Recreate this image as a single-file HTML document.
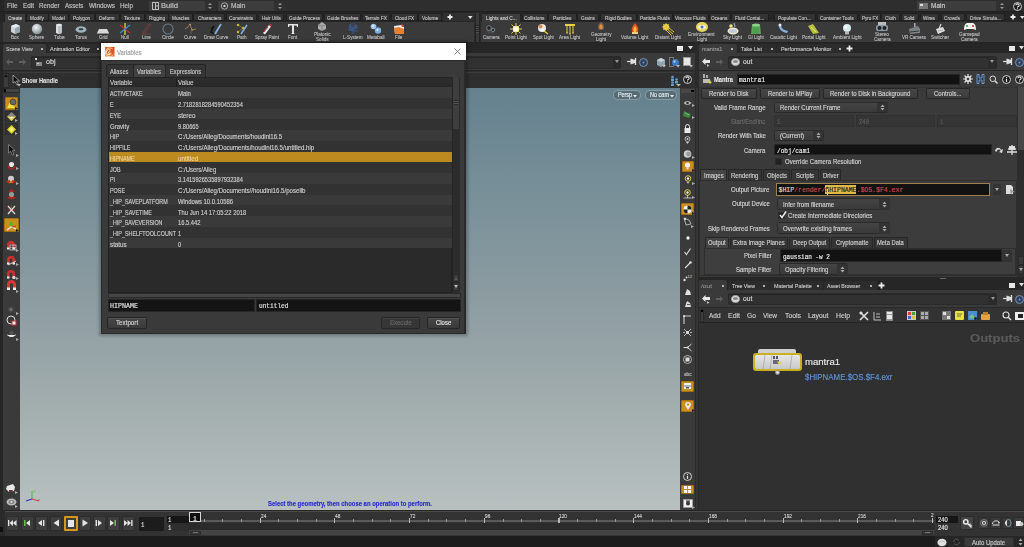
<!DOCTYPE html>
<html><head><meta charset="utf-8">
<style>
*{margin:0;padding:0;box-sizing:border-box}
html,body{width:1024px;height:547px;overflow:hidden;background:#1b1b1b;font-family:"Liberation Sans",sans-serif;color:#c8c8c8}
.a{position:absolute}
.t{position:absolute;white-space:nowrap;line-height:1;-webkit-text-stroke:0.15px currentColor}
svg{overflow:visible}
</style></head><body>

<div class="a" style="left:0px;top:0px;width:1024px;height:12px;background:#2e2e2e;"></div>
<div class="a" style="left:0px;top:0px;width:4px;height:12px;background:#262626;"></div>
<div class="t" style="left:6.80px;top:1.50px;font-size:7px;color:#c4c4c4;font-family:'Liberation Sans',sans-serif;transform:scaleX(0.9309);transform-origin:0 0;">File</div>
<div class="t" style="left:22.50px;top:1.50px;font-size:7px;color:#c4c4c4;font-family:'Liberation Sans',sans-serif;transform:scaleX(0.9119);transform-origin:0 0;">Edit</div>
<div class="t" style="left:39.00px;top:1.50px;font-size:7px;color:#c4c4c4;font-family:'Liberation Sans',sans-serif;transform:scaleX(0.8929);transform-origin:0 0;">Render</div>
<div class="t" style="left:65.00px;top:1.50px;font-size:7px;color:#c4c4c4;font-family:'Liberation Sans',sans-serif;transform:scaleX(0.8759);transform-origin:0 0;">Assets</div>
<div class="t" style="left:88.90px;top:1.50px;font-size:7px;color:#c4c4c4;font-family:'Liberation Sans',sans-serif;transform:scaleX(0.9156);transform-origin:0 0;">Windows</div>
<div class="t" style="left:120.30px;top:1.50px;font-size:7px;color:#c4c4c4;font-family:'Liberation Sans',sans-serif;transform:scaleX(0.9030);transform-origin:0 0;">Help</div>
<div class="a" style="left:149px;top:1px;width:56px;height:10px;background:#3d3d3d;border-radius:1px;"></div>
<div class="a" style="left:205px;top:1px;width:11px;height:10px;background:#303030;"></div>
<svg class="a" style="left:152px;top:2px;" width="8" height="8" viewBox="0 0 8 8"><rect x="0.5" y="0.5" width="6" height="7" fill="none" stroke="#bbb" stroke-width="1"/><line x1="3.5" y1="0.5" x2="3.5" y2="7.5" stroke="#bbb"/><line x1="3.5" y1="4" x2="6.5" y2="4" stroke="#bbb"/></svg>
<div class="t" style="left:161.00px;top:1.50px;font-size:7px;color:#c4c4c4;font-family:'Liberation Sans',sans-serif;transform:scaleX(1.0921);transform-origin:0 0;">Build</div>
<svg class="a" style="left:207px;top:2px;" width="6" height="8" viewBox="0 0 6 8"><path d="M1 3 L3 1 L5 3 Z M1 5 L3 7 L5 5 Z" fill="#999"/></svg>
<div class="a" style="left:218px;top:1px;width:56px;height:10px;background:#3d3d3d;"></div>
<div class="a" style="left:274px;top:1px;width:12px;height:10px;background:#303030;"></div>
<svg class="a" style="left:220px;top:2px;" width="9" height="8" viewBox="0 0 9 8"><circle cx="4.5" cy="4" r="3.2" fill="none" stroke="#aaa" stroke-width="1"/><rect x="3.5" y="3" width="2" height="2" fill="#ccc"/></svg>
<div class="t" style="left:231.00px;top:1.50px;font-size:7px;color:#c4c4c4;font-family:'Liberation Sans',sans-serif;transform:scaleX(0.9227);transform-origin:0 0;">Main</div>
<svg class="a" style="left:277px;top:2px;" width="6" height="8" viewBox="0 0 6 8"><path d="M1 3 L3 1 L5 3 Z M1 5 L3 7 L5 5 Z" fill="#999"/></svg>
<div class="a" style="left:917px;top:1px;width:79px;height:10px;background:#3d3d3d;"></div>
<div class="a" style="left:996px;top:1px;width:12px;height:10px;background:#303030;"></div>
<svg class="a" style="left:919px;top:2px;" width="10" height="8" viewBox="0 0 10 8"><rect x="0" y="1" width="9" height="6" fill="#777"/><rect x="1" y="2" width="3" height="2" fill="#ddd"/></svg>
<div class="t" style="left:931.00px;top:1.50px;font-size:7px;color:#d0d0d0;font-family:'Liberation Sans',sans-serif;transform:scaleX(0.9227);transform-origin:0 0;">Main</div>
<svg class="a" style="left:999px;top:2px;" width="6" height="8" viewBox="0 0 6 8"><path d="M1 3 L3 1 L5 3 Z M1 5 L3 7 L5 5 Z" fill="#999"/></svg>
<svg class="a" style="left:1012.5px;top:1.5px;" width="9" height="9" viewBox="0 0 9 9"><circle cx="4.5" cy="4.5" r="4.0" fill="#1e1e1e" stroke="#e0e0e0" stroke-width="0.9"/><path d="M2.9 3.3 A1.6 1.5 0 1 1 4.8 4.8 L4.5 5.5" fill="none" stroke="#e8e8e8" stroke-width="1.1"/><circle cx="4.5" cy="6.8" r="0.6" fill="#e8e8e8"/></svg>
<div class="a" style="left:0px;top:11px;width:1024px;height:1px;background:#1f1f1f;"></div>
<div class="a" style="left:0px;top:12px;width:1024px;height:10px;background:#262626;"></div>
<div class="a" style="left:4.1px;top:12.5px;width:21.799999999999997px;height:9.5px;background:#3c3c3c;border-radius:1.5px 1.5px 0 0;border:1px solid #222;border-bottom:none;"></div>
<div class="t" style="left:7.90px;top:14.50px;font-size:6.0px;color:#d0d0d0;font-family:'Liberation Sans',sans-serif;transform:scaleX(0.7889);transform-origin:0 0;">Create</div>
<div class="a" style="left:25.9px;top:12.5px;width:22.800000000000004px;height:8.8px;background:#333;border-radius:1.5px 1.5px 0 0;border:1px solid #1f1f1f;"></div>
<div class="t" style="left:30.37px;top:14.50px;font-size:6.0px;color:#c0c0c0;font-family:'Liberation Sans',sans-serif;transform:scaleX(0.7842);transform-origin:0 0;">Modify</div>
<div class="a" style="left:48.3px;top:12.5px;width:20.799999999999997px;height:8.8px;background:#333;border-radius:1.5px 1.5px 0 0;border:1px solid #1f1f1f;"></div>
<div class="t" style="left:52.31px;top:14.50px;font-size:6.0px;color:#c0c0c0;font-family:'Liberation Sans',sans-serif;transform:scaleX(0.7816);transform-origin:0 0;">Model</div>
<div class="a" style="left:68.8px;top:12.5px;width:26.200000000000003px;height:8.8px;background:#333;border-radius:1.5px 1.5px 0 0;border:1px solid #1f1f1f;"></div>
<div class="t" style="left:73.28px;top:14.50px;font-size:6.0px;color:#c0c0c0;font-family:'Liberation Sans',sans-serif;transform:scaleX(0.7951);transform-origin:0 0;">Polygon</div>
<div class="a" style="left:94.7px;top:12.5px;width:25.099999999999994px;height:8.8px;background:#333;border-radius:1.5px 1.5px 0 0;border:1px solid #1f1f1f;"></div>
<div class="t" style="left:99.47px;top:14.50px;font-size:6.0px;color:#c0c0c0;font-family:'Liberation Sans',sans-serif;transform:scaleX(0.7911);transform-origin:0 0;">Deform</div>
<div class="a" style="left:119.6px;top:12.5px;width:25.599999999999994px;height:8.8px;background:#333;border-radius:1.5px 1.5px 0 0;border:1px solid #1f1f1f;"></div>
<div class="t" style="left:124.31px;top:14.50px;font-size:6.0px;color:#c0c0c0;font-family:'Liberation Sans',sans-serif;transform:scaleX(0.8225);transform-origin:0 0;">Texture</div>
<div class="a" style="left:145.0px;top:12.5px;width:23.599999999999994px;height:8.8px;background:#333;border-radius:1.5px 1.5px 0 0;border:1px solid #1f1f1f;"></div>
<div class="t" style="left:148.74px;top:14.50px;font-size:6.0px;color:#c0c0c0;font-family:'Liberation Sans',sans-serif;transform:scaleX(0.7920);transform-origin:0 0;">Rigging</div>
<div class="a" style="left:168.4px;top:12.5px;width:25.099999999999994px;height:8.8px;background:#333;border-radius:1.5px 1.5px 0 0;border:1px solid #1f1f1f;"></div>
<div class="t" style="left:172.25px;top:14.50px;font-size:6.0px;color:#c0c0c0;font-family:'Liberation Sans',sans-serif;transform:scaleX(0.7904);transform-origin:0 0;">Muscles</div>
<div class="a" style="left:193.3px;top:12.5px;width:31.899999999999977px;height:8.8px;background:#333;border-radius:1.5px 1.5px 0 0;border:1px solid #1f1f1f;"></div>
<div class="t" style="left:197.52px;top:14.50px;font-size:6.0px;color:#c0c0c0;font-family:'Liberation Sans',sans-serif;transform:scaleX(0.7993);transform-origin:0 0;">Characters</div>
<div class="a" style="left:225.5px;top:12.5px;width:31.5px;height:8.8px;background:#333;border-radius:1.5px 1.5px 0 0;border:1px solid #1f1f1f;"></div>
<div class="t" style="left:229.11px;top:14.50px;font-size:6.0px;color:#c0c0c0;font-family:'Liberation Sans',sans-serif;transform:scaleX(0.7998);transform-origin:0 0;">Constraints</div>
<div class="a" style="left:258.4px;top:12.5px;width:25.600000000000023px;height:8.8px;background:#333;border-radius:1.5px 1.5px 0 0;border:1px solid #1f1f1f;"></div>
<div class="t" style="left:261.76px;top:14.50px;font-size:6.0px;color:#c0c0c0;font-family:'Liberation Sans',sans-serif;transform:scaleX(0.7760);transform-origin:0 0;">Hair Utils</div>
<div class="a" style="left:285.8px;top:12.5px;width:37.099999999999966px;height:8.8px;background:#333;border-radius:1.5px 1.5px 0 0;border:1px solid #1f1f1f;"></div>
<div class="t" style="left:288.78px;top:14.50px;font-size:6.0px;color:#c0c0c0;font-family:'Liberation Sans',sans-serif;transform:scaleX(0.7911);transform-origin:0 0;">Guide Process</div>
<div class="a" style="left:323.9px;top:12.5px;width:37.10000000000002px;height:8.8px;background:#333;border-radius:1.5px 1.5px 0 0;border:1px solid #1f1f1f;"></div>
<div class="t" style="left:326.75px;top:14.50px;font-size:6.0px;color:#c0c0c0;font-family:'Liberation Sans',sans-serif;transform:scaleX(0.7914);transform-origin:0 0;">Guide Brushes</div>
<div class="a" style="left:362.0px;top:12.5px;width:28.19999999999999px;height:8.8px;background:#333;border-radius:1.5px 1.5px 0 0;border:1px solid #1f1f1f;"></div>
<div class="t" style="left:365.17px;top:14.50px;font-size:6.0px;color:#c0c0c0;font-family:'Liberation Sans',sans-serif;transform:scaleX(0.7896);transform-origin:0 0;">Terrain FX</div>
<div class="a" style="left:390.9px;top:12.5px;width:27.200000000000045px;height:8.8px;background:#333;border-radius:1.5px 1.5px 0 0;border:1px solid #1f1f1f;"></div>
<div class="t" style="left:394.97px;top:14.50px;font-size:6.0px;color:#c0c0c0;font-family:'Liberation Sans',sans-serif;transform:scaleX(0.7622);transform-origin:0 0;">Cloud FX</div>
<div class="a" style="left:418.4px;top:12.5px;width:23.80000000000001px;height:8.8px;background:#333;border-radius:1.5px 1.5px 0 0;border:1px solid #1f1f1f;"></div>
<div class="t" style="left:422.23px;top:14.50px;font-size:6.0px;color:#c0c0c0;font-family:'Liberation Sans',sans-serif;transform:scaleX(0.8069);transform-origin:0 0;">Volume</div>
<div class="a" style="left:442.5px;top:12.5px;width:31px;height:8.5px;background:#303030;"></div>
<svg class="a" style="left:447.0px;top:13.600000000000001px;" width="6" height="6" viewBox="0 0 6 6"><path d="M3.0 0.5 L3.0 5.5 M0.5 3.0 L5.5 3.0" stroke="#ececec" stroke-width="1.8"/></svg>
<svg class="a" style="left:467.5px;top:15.5px;" width="5" height="4" viewBox="0 0 5 4"><path d="M0 0 L4.5 0 L2.25 3Z" fill="#e8e8e8"/></svg>
<div class="a" style="left:480.9px;top:12.5px;width:40.39999999999998px;height:9.5px;background:#3c3c3c;border-radius:1.5px 1.5px 0 0;border:1px solid #222;border-bottom:none;"></div>
<div class="t" style="left:485.75px;top:14.50px;font-size:6.0px;color:#d0d0d0;font-family:'Liberation Sans',sans-serif;transform:scaleX(0.7936);transform-origin:0 0;">Lights and C...</div>
<div class="a" style="left:521.5px;top:12.5px;width:26px;height:8.8px;background:#333;border-radius:1.5px 1.5px 0 0;border:1px solid #1f1f1f;"></div>
<div class="t" style="left:524.27px;top:14.50px;font-size:6.0px;color:#c0c0c0;font-family:'Liberation Sans',sans-serif;transform:scaleX(0.7969);transform-origin:0 0;">Collisions</div>
<div class="a" style="left:548.0px;top:12.5px;width:28.5px;height:8.8px;background:#333;border-radius:1.5px 1.5px 0 0;border:1px solid #1f1f1f;"></div>
<div class="t" style="left:553.09px;top:14.50px;font-size:6.0px;color:#c0c0c0;font-family:'Liberation Sans',sans-serif;transform:scaleX(0.7963);transform-origin:0 0;">Particles</div>
<div class="a" style="left:577.0px;top:12.5px;width:21.5px;height:8.8px;background:#333;border-radius:1.5px 1.5px 0 0;border:1px solid #1f1f1f;"></div>
<div class="t" style="left:580.80px;top:14.50px;font-size:6.0px;color:#c0c0c0;font-family:'Liberation Sans',sans-serif;transform:scaleX(0.7863);transform-origin:0 0;">Grains</div>
<div class="a" style="left:599.5px;top:12.5px;width:37px;height:8.8px;background:#333;border-radius:1.5px 1.5px 0 0;border:1px solid #1f1f1f;"></div>
<div class="t" style="left:604.73px;top:14.50px;font-size:6.0px;color:#c0c0c0;font-family:'Liberation Sans',sans-serif;transform:scaleX(0.7881);transform-origin:0 0;">Rigid Bodies</div>
<div class="a" style="left:636.5px;top:12.5px;width:36px;height:8.8px;background:#333;border-radius:1.5px 1.5px 0 0;border:1px solid #1f1f1f;"></div>
<div class="t" style="left:639.56px;top:14.50px;font-size:6.0px;color:#c0c0c0;font-family:'Liberation Sans',sans-serif;transform:scaleX(0.7930);transform-origin:0 0;">Particle Fluids</div>
<div class="a" style="left:673.0px;top:12.5px;width:35.5px;height:8.8px;background:#333;border-radius:1.5px 1.5px 0 0;border:1px solid #1f1f1f;"></div>
<div class="t" style="left:675.40px;top:14.50px;font-size:6.0px;color:#c0c0c0;font-family:'Liberation Sans',sans-serif;transform:scaleX(0.7958);transform-origin:0 0;">Viscous Fluids</div>
<div class="a" style="left:708.5px;top:12.5px;width:22px;height:8.8px;background:#333;border-radius:1.5px 1.5px 0 0;border:1px solid #1f1f1f;"></div>
<div class="t" style="left:711.33px;top:14.50px;font-size:6.0px;color:#c0c0c0;font-family:'Liberation Sans',sans-serif;transform:scaleX(0.7905);transform-origin:0 0;">Oceans</div>
<div class="a" style="left:730.5px;top:12.5px;width:38px;height:8.8px;background:#333;border-radius:1.5px 1.5px 0 0;border:1px solid #1f1f1f;"></div>
<div class="t" style="left:734.85px;top:14.50px;font-size:6.0px;color:#c0c0c0;font-family:'Liberation Sans',sans-serif;transform:scaleX(0.7916);transform-origin:0 0;">Fluid Contai...</div>
<div class="a" style="left:773.5px;top:12.5px;width:42.39999999999998px;height:8.8px;background:#333;border-radius:1.5px 1.5px 0 0;border:1px solid #1f1f1f;"></div>
<div class="t" style="left:778.30px;top:14.50px;font-size:6.0px;color:#c0c0c0;font-family:'Liberation Sans',sans-serif;transform:scaleX(0.7932);transform-origin:0 0;">Populate Con...</div>
<div class="a" style="left:816.5px;top:12.5px;width:41px;height:8.8px;background:#333;border-radius:1.5px 1.5px 0 0;border:1px solid #1f1f1f;"></div>
<div class="t" style="left:820.17px;top:14.50px;font-size:6.0px;color:#c0c0c0;font-family:'Liberation Sans',sans-serif;transform:scaleX(0.8094);transform-origin:0 0;">Container Tools</div>
<div class="a" style="left:859.0px;top:12.5px;width:21.5px;height:8.8px;background:#333;border-radius:1.5px 1.5px 0 0;border:1px solid #1f1f1f;"></div>
<div class="t" style="left:861.56px;top:14.50px;font-size:6.0px;color:#c0c0c0;font-family:'Liberation Sans',sans-serif;transform:scaleX(0.7556);transform-origin:0 0;">Pyro FX</div>
<div class="a" style="left:880.5px;top:12.5px;width:19px;height:8.8px;background:#333;border-radius:1.5px 1.5px 0 0;border:1px solid #1f1f1f;"></div>
<div class="t" style="left:884.53px;top:14.50px;font-size:6.0px;color:#c0c0c0;font-family:'Liberation Sans',sans-serif;transform:scaleX(0.7812);transform-origin:0 0;">Cloth</div>
<div class="a" style="left:900.5px;top:12.5px;width:18px;height:8.8px;background:#333;border-radius:1.5px 1.5px 0 0;border:1px solid #1f1f1f;"></div>
<div class="t" style="left:904.28px;top:14.50px;font-size:6.0px;color:#c0c0c0;font-family:'Liberation Sans',sans-serif;transform:scaleX(0.7823);transform-origin:0 0;">Solid</div>
<div class="a" style="left:919.5px;top:12.5px;width:19px;height:8.8px;background:#333;border-radius:1.5px 1.5px 0 0;border:1px solid #1f1f1f;"></div>
<div class="t" style="left:923.06px;top:14.50px;font-size:6.0px;color:#c0c0c0;font-family:'Liberation Sans',sans-serif;transform:scaleX(0.7745);transform-origin:0 0;">Wires</div>
<div class="a" style="left:940.5px;top:12.5px;width:24px;height:8.8px;background:#333;border-radius:1.5px 1.5px 0 0;border:1px solid #1f1f1f;"></div>
<div class="t" style="left:944.45px;top:14.50px;font-size:6.0px;color:#c0c0c0;font-family:'Liberation Sans',sans-serif;transform:scaleX(0.7920);transform-origin:0 0;">Crowds</div>
<div class="a" style="left:965.5px;top:12.5px;width:39px;height:8.8px;background:#333;border-radius:1.5px 1.5px 0 0;border:1px solid #1f1f1f;"></div>
<div class="t" style="left:969.55px;top:14.50px;font-size:6.0px;color:#c0c0c0;font-family:'Liberation Sans',sans-serif;transform:scaleX(0.7919);transform-origin:0 0;">Drive Simula...</div>
<svg class="a" style="left:1009.5px;top:13.600000000000001px;" width="6" height="6" viewBox="0 0 6 6"><path d="M3.0 0.5 L3.0 5.5 M0.5 3.0 L5.5 3.0" stroke="#ececec" stroke-width="1.8"/></svg>
<svg class="a" style="left:1019.5px;top:15.5px;" width="5" height="4" viewBox="0 0 5 4"><path d="M0 0 L4.5 0 L2.25 3Z" fill="#e8e8e8"/></svg>
<div class="a" style="left:0px;top:22px;width:1024px;height:21px;background:#3a3a3a;"></div>
<div class="a" style="left:0px;top:22px;width:3px;height:21px;background:#2a2a2a;"></div>
<div class="a" style="left:474px;top:12px;width:6.5px;height:31px;background:#2a2a2a;"></div>
<div class="a" style="left:475px;top:13px;width:4.5px;height:29px;background:#3a3a3a;border-left:1px solid #222;border-right:1px solid #222;"></div>
<div class="a" style="left:476px;top:25px;width:2.5px;height:8px;background:repeating-linear-gradient(#2a2a2a 0 1px,#4a4a4a 1px 2px);"></div>
<div class="a" style="left:0px;top:42px;width:1024px;height:1px;background:#232323;"></div>
<svg class="a" style="left:8px;top:22.5px" width="14" height="12" viewBox="0 0 14 12"><path d="M3 3 L8 1 L12 3 L12 9 L7 11 L3 9Z" fill="#c9d3d8"/><path d="M3 3 L8 1 L12 3 L7 5Z" fill="#e8eef0"/><path d="M7 5 L12 3 L12 9 L7 11Z" fill="#9aa8ae"/></svg>
<div class="t" style="left:11.08px;top:34.60px;font-size:5.8px;color:#bcbcbc;font-family:'Liberation Sans',sans-serif;transform:scaleX(0.7849);transform-origin:0 0;">Box</div>
<svg class="a" style="left:29.799999999999997px;top:22.5px" width="14" height="12" viewBox="0 0 14 12"><defs><radialGradient id="gs" cx="0.4" cy="0.35" r="0.7"><stop offset="0" stop-color="#f0f4f6"/><stop offset="1" stop-color="#7d8a90"/></radialGradient></defs><circle cx="7" cy="6" r="5.2" fill="url(#gs)"/></svg>
<div class="t" style="left:29.27px;top:34.60px;font-size:5.8px;color:#bcbcbc;font-family:'Liberation Sans',sans-serif;transform:scaleX(0.8053);transform-origin:0 0;">Sphere</div>
<svg class="a" style="left:52.4px;top:22.5px" width="14" height="12" viewBox="0 0 14 12"><rect x="4" y="1" width="6" height="10" rx="2" fill="#b9c3c8"/><ellipse cx="7" cy="2" rx="3" ry="1.2" fill="#e0e6e8"/><rect x="4" y="2" width="2" height="8" fill="#d6dde0"/></svg>
<div class="t" style="left:54.12px;top:34.60px;font-size:5.8px;color:#bcbcbc;font-family:'Liberation Sans',sans-serif;transform:scaleX(0.8116);transform-origin:0 0;">Tube</div>
<svg class="a" style="left:73.9px;top:22.5px" width="14" height="12" viewBox="0 0 14 12"><ellipse cx="7" cy="6.5" rx="5.5" ry="3.2" fill="#9fb2bd"/><ellipse cx="7" cy="6.3" rx="2.5" ry="1" fill="#2a3a45"/></svg>
<div class="t" style="left:74.96px;top:34.60px;font-size:5.8px;color:#bcbcbc;font-family:'Liberation Sans',sans-serif;transform:scaleX(0.8380);transform-origin:0 0;">Torus</div>
<svg class="a" style="left:95.9px;top:22.5px" width="14" height="12" viewBox="0 0 14 12"><path d="M3 6 L11 6 L13 10 L1 10Z" fill="#d8d8d8"/><path d="M1 10 L13 10 L13 11 L1 11Z" fill="#888"/></svg>
<div class="t" style="left:98.62px;top:34.60px;font-size:5.8px;color:#bcbcbc;font-family:'Liberation Sans',sans-serif;transform:scaleX(0.7821);transform-origin:0 0;">Grid</div>
<svg class="a" style="left:118px;top:22.5px" width="14" height="12" viewBox="0 0 14 12"><line x1="7" y1="0" x2="7" y2="12" stroke="#b8c040" stroke-width="1.6"/><line x1="2" y1="2" x2="12" y2="10" stroke="#c03030" stroke-width="1.3"/><line x1="12" y1="2" x2="2" y2="10" stroke="#4090d0" stroke-width="1.3"/></svg>
<div class="t" style="left:121.10px;top:34.60px;font-size:5.8px;color:#bcbcbc;font-family:'Liberation Sans',sans-serif;transform:scaleX(0.7812);transform-origin:0 0;">Null</div>
<svg class="a" style="left:139.2px;top:22.5px" width="14" height="12" viewBox="0 0 14 12"><path d="M3 11 L10 1 L12 2 L5 11Z" fill="none" stroke="#7a4040" stroke-width="0.9"/><line x1="3" y1="11" x2="12" y2="11" stroke="#7a4040" stroke-width="0.8"/></svg>
<div class="t" style="left:141.84px;top:34.60px;font-size:5.8px;color:#bcbcbc;font-family:'Liberation Sans',sans-serif;transform:scaleX(0.7954);transform-origin:0 0;">Line</div>
<svg class="a" style="left:161.4px;top:22.5px" width="14" height="12" viewBox="0 0 14 12"><circle cx="7" cy="6" r="5" fill="none" stroke="#6a7a8a" stroke-width="1.1"/></svg>
<div class="t" style="left:162.49px;top:34.60px;font-size:5.8px;color:#bcbcbc;font-family:'Liberation Sans',sans-serif;transform:scaleX(0.7967);transform-origin:0 0;">Circle</div>
<svg class="a" style="left:183.6px;top:22.5px" width="14" height="12" viewBox="0 0 14 12"><path d="M1 6 L4 4 L6 1 L8 7 L12 6" fill="none" stroke="#9a7a50" stroke-width="1"/><circle cx="6" cy="1.5" r="0.8" fill="#c0a070"/><circle cx="8" cy="7" r="0.8" fill="#c0a070"/><path d="M7 8 L7 11" stroke="#7a6040"/></svg>
<div class="t" style="left:184.43px;top:34.60px;font-size:5.8px;color:#bcbcbc;font-family:'Liberation Sans',sans-serif;transform:scaleX(0.7981);transform-origin:0 0;">Curve</div>
<svg class="a" style="left:209px;top:22.5px" width="14" height="12" viewBox="0 0 14 12"><path d="M2 6 L5 3 L2 9 L5 11" fill="none" stroke="#111" stroke-width="1.3"/><line x1="6" y1="11" x2="12" y2="1" stroke="#80b0e0" stroke-width="1.8"/></svg>
<div class="t" style="left:203.79px;top:34.60px;font-size:5.8px;color:#bcbcbc;font-family:'Liberation Sans',sans-serif;transform:scaleX(0.7978);transform-origin:0 0;">Draw Curve</div>
<svg class="a" style="left:234.5px;top:22.5px" width="14" height="12" viewBox="0 0 14 12"><circle cx="3" cy="2" r="1.2" fill="#e0c030"/><circle cx="8" cy="5" r="1.2" fill="#e0c030"/><circle cx="3" cy="9" r="1.2" fill="#e0c030"/><line x1="6" y1="11" x2="12" y2="2" stroke="#80b0e0" stroke-width="1.6"/><path d="M3 2 L8 5 L3 9" fill="none" stroke="#a09040" stroke-width="0.6"/></svg>
<div class="t" style="left:236.77px;top:34.60px;font-size:5.8px;color:#bcbcbc;font-family:'Liberation Sans',sans-serif;transform:scaleX(0.7920);transform-origin:0 0;">Path</div>
<svg class="a" style="left:260px;top:22.5px" width="14" height="12" viewBox="0 0 14 12"><path d="M3 10 L9 2 L11 3.5 L5 11.5Z" fill="#e8e8e8"/><path d="M9 2 L11 3.5 L12 2 L10 0.5Z" fill="#c03030"/><path d="M4 9 L8 4" stroke="#c04040" stroke-width="1"/></svg>
<div class="t" style="left:255.01px;top:34.60px;font-size:5.8px;color:#bcbcbc;font-family:'Liberation Sans',sans-serif;transform:scaleX(0.7995);transform-origin:0 0;">Spray Paint</div>
<svg class="a" style="left:286px;top:22.5px" width="14" height="12" viewBox="0 0 14 12"><path d="M2 1 L12 1 L12 4 L11 4 L10.5 2.5 L8 2.5 L8 10.5 L9.5 11 L4.5 11 L6 10.5 L6 2.5 L3.5 2.5 L3 4 L2 4Z" fill="#e4e4e4"/></svg>
<div class="t" style="left:288.39px;top:34.60px;font-size:5.8px;color:#bcbcbc;font-family:'Liberation Sans',sans-serif;transform:scaleX(0.7942);transform-origin:0 0;">Font</div>
<svg class="a" style="left:315px;top:21px" width="14" height="12" viewBox="0 0 14 12"><path d="M3 4 L7 1 L11 4 L11 8 L7 10 L3 8Z" fill="#aaa"/><path d="M3 4 L7 5 L11 4 M7 5 L7 10" fill="none" stroke="#777" stroke-width="0.7"/></svg>
<div class="t" style="left:313.67px;top:31.60px;font-size:5.8px;color:#bcbcbc;font-family:'Liberation Sans',sans-serif;transform:scaleX(0.8075);transform-origin:0 0;">Platonic</div>
<div class="t" style="left:315.67px;top:36.60px;font-size:5.8px;color:#bcbcbc;font-family:'Liberation Sans',sans-serif;transform:scaleX(0.8010);transform-origin:0 0;">Solids</div>
<svg class="a" style="left:346px;top:22.5px" width="14" height="12" viewBox="0 0 14 12"><path d="M7 11 L7 5 M7 7 L3 3 M7 6 L11 2 M5 5 L4 1 M9 4 L12 5 M6 8 L2 6 M8 8 L12 8" stroke="#3a5a90" stroke-width="1.2" fill="none"/><circle cx="7" cy="4" r="4" fill="#3a5a90" opacity="0.4"/></svg>
<div class="t" style="left:343.25px;top:34.60px;font-size:5.8px;color:#bcbcbc;font-family:'Liberation Sans',sans-serif;transform:scaleX(0.7959);transform-origin:0 0;">L-System</div>
<svg class="a" style="left:369px;top:22.5px" width="14" height="12" viewBox="0 0 14 12"><circle cx="4.5" cy="3.5" r="2.8" fill="#9cc4ec"/><circle cx="9" cy="7.5" r="3.2" fill="#7aaee0"/><circle cx="4" cy="3" r="1" fill="#e8f4ff"/><circle cx="8.5" cy="6.8" r="1.1" fill="#e8f4ff"/></svg>
<div class="t" style="left:367.19px;top:34.60px;font-size:5.8px;color:#bcbcbc;font-family:'Liberation Sans',sans-serif;transform:scaleX(0.8038);transform-origin:0 0;">Metaball</div>
<svg class="a" style="left:391.5px;top:22.5px" width="14" height="12" viewBox="0 0 14 12"><path d="M2 3 L9 2 L12 4 L12 11 L3 11Z" fill="#f0f0f0"/><path d="M2 5 L7 4 L12 6 L12 11 L3 11Z" fill="#e88030"/><path d="M9 1 L12 2 L12 4 L10 4Z" fill="#d04020"/></svg>
<div class="t" style="left:394.83px;top:34.60px;font-size:5.8px;color:#bcbcbc;font-family:'Liberation Sans',sans-serif;transform:scaleX(0.7858);transform-origin:0 0;">File</div>
<svg class="a" style="left:484px;top:22.5px" width="14" height="12" viewBox="0 0 14 12"><ellipse cx="7" cy="7" rx="5" ry="3.5" fill="#404a50"/><circle cx="5" cy="5" r="2.3" fill="#222" stroke="#aaa" stroke-width="0.6"/><circle cx="9" cy="7" r="1.6" fill="#222" stroke="#aaa" stroke-width="0.6"/></svg>
<div class="t" style="left:482.69px;top:34.60px;font-size:5.8px;color:#bcbcbc;font-family:'Liberation Sans',sans-serif;transform:scaleX(0.8058);transform-origin:0 0;">Camera</div>
<svg class="a" style="left:509px;top:22.5px" width="14" height="12" viewBox="0 0 14 12"><circle cx="7" cy="6" r="3.2" fill="#f6f0b0"/><path d="M7 0 L7 12 M1 6 L13 6 M2.5 1.5 L11.5 10.5 M11.5 1.5 L2.5 10.5" stroke="#e0d040" stroke-width="1"/><circle cx="7" cy="6" r="2.6" fill="#fffbe0"/></svg>
<div class="t" style="left:505.04px;top:34.60px;font-size:5.8px;color:#bcbcbc;font-family:'Liberation Sans',sans-serif;transform:scaleX(0.7994);transform-origin:0 0;">Point Light</div>
<svg class="a" style="left:536px;top:22.5px" width="14" height="12" viewBox="0 0 14 12"><circle cx="6" cy="5" r="4" fill="#e8e8e8"/><circle cx="4.5" cy="3.5" r="2" fill="#d09050"/><path d="M8 8 L12 11" stroke="#e0d040" stroke-width="1.5"/><circle cx="7" cy="7" r="1.5" fill="#fff"/></svg>
<div class="t" style="left:532.58px;top:34.60px;font-size:5.8px;color:#bcbcbc;font-family:'Liberation Sans',sans-serif;transform:scaleX(0.7980);transform-origin:0 0;">Spot Light</div>
<svg class="a" style="left:563px;top:22.5px" width="14" height="12" viewBox="0 0 14 12"><rect x="2" y="1" width="10" height="2" fill="#e8d040"/><path d="M4 3 L4 10 M7 3 L7 11 M10 3 L10 10" stroke="#e8d040" stroke-width="1"/><circle cx="4" cy="10" r="0.8" fill="#e8d040"/><circle cx="7" cy="11" r="0.8" fill="#e8d040"/><circle cx="10" cy="10" r="0.8" fill="#e8d040"/></svg>
<div class="t" style="left:559.45px;top:34.60px;font-size:5.8px;color:#bcbcbc;font-family:'Liberation Sans',sans-serif;transform:scaleX(0.7984);transform-origin:0 0;">Area Light</div>
<svg class="a" style="left:594px;top:21px" width="14" height="12" viewBox="0 0 14 12"><path d="M7 1 C10 3 11 6 9 9 L5 9 C3 6 4 3 7 1Z" fill="#806050"/><path d="M7 3 C9 5 9 7 8 8 L6 8 C5 6 5 5 7 3Z" fill="#e09040"/></svg>
<div class="t" style="left:590.70px;top:31.60px;font-size:5.8px;color:#bcbcbc;font-family:'Liberation Sans',sans-serif;transform:scaleX(0.8087);transform-origin:0 0;">Geometry</div>
<div class="t" style="left:595.97px;top:36.60px;font-size:5.8px;color:#bcbcbc;font-family:'Liberation Sans',sans-serif;transform:scaleX(0.7997);transform-origin:0 0;">Light</div>
<svg class="a" style="left:627.5px;top:22.5px" width="14" height="12" viewBox="0 0 14 12"><path d="M7 0 C10 3 11 6 10 9 L4 9 C3 6 4 3 7 0Z" fill="#e05020"/><path d="M7 3 C9 5 9 7 8 9 L6 9 C5 7 5 5 7 3Z" fill="#f0c040"/><rect x="4" y="9" width="6" height="2" fill="#f0d080"/></svg>
<div class="t" style="left:620.87px;top:34.60px;font-size:5.8px;color:#bcbcbc;font-family:'Liberation Sans',sans-serif;transform:scaleX(0.8127);transform-origin:0 0;">Volume Light</div>
<svg class="a" style="left:661px;top:22.5px" width="14" height="12" viewBox="0 0 14 12"><circle cx="5" cy="4" r="3" fill="#f0e060"/><path d="M5 0 L5 8 M1 4 L9 4 M2 1 L8 7 M8 1 L2 7" stroke="#e0c030" stroke-width="0.8"/><path d="M6 6 L12 11 M8 5 L13 9 M5 7 L10 12" stroke="#e0c030" stroke-width="1"/></svg>
<div class="t" style="left:655.06px;top:34.60px;font-size:5.8px;color:#bcbcbc;font-family:'Liberation Sans',sans-serif;transform:scaleX(0.8027);transform-origin:0 0;">Distant Light</div>
<svg class="a" style="left:694.7px;top:21px" width="14" height="12" viewBox="0 0 14 12"><ellipse cx="7" cy="6" rx="6" ry="5" fill="#e8d860"/><ellipse cx="7" cy="6" rx="4" ry="2" fill="#eee"/><circle cx="7" cy="6" r="1.5" fill="#6070a0"/></svg>
<div class="t" style="left:688.43px;top:31.60px;font-size:5.8px;color:#bcbcbc;font-family:'Liberation Sans',sans-serif;transform:scaleX(0.8153);transform-origin:0 0;">Environment</div>
<div class="t" style="left:696.67px;top:36.60px;font-size:5.8px;color:#bcbcbc;font-family:'Liberation Sans',sans-serif;transform:scaleX(0.7997);transform-origin:0 0;">Light</div>
<svg class="a" style="left:725.5px;top:22.5px" width="14" height="12" viewBox="0 0 14 12"><ellipse cx="7" cy="8" rx="5.5" ry="3.5" fill="#f0ecd0"/><ellipse cx="7" cy="8" rx="4" ry="2" fill="#c0c8e0"/><circle cx="5" cy="3" r="1.8" fill="#f0e080"/><path d="M8 0 L9 4" stroke="#80b0d0" stroke-width="1.2"/></svg>
<div class="t" style="left:723.02px;top:34.60px;font-size:5.8px;color:#bcbcbc;font-family:'Liberation Sans',sans-serif;transform:scaleX(0.7951);transform-origin:0 0;">Sky Light</div>
<svg class="a" style="left:748.6px;top:22.5px" width="14" height="12" viewBox="0 0 14 12"><path d="M3 2 L11 2 L12 11 L2 11Z" fill="#58a858"/><ellipse cx="7" cy="2" rx="4" ry="1.5" fill="#8ad08a"/><path d="M5 4 L5 11 M7 4 L7 11 M9 4 L9 11" stroke="#3a803a" stroke-width="0.6"/></svg>
<div class="t" style="left:747.71px;top:34.60px;font-size:5.8px;color:#bcbcbc;font-family:'Liberation Sans',sans-serif;transform:scaleX(0.7766);transform-origin:0 0;">GI Light</div>
<svg class="a" style="left:776px;top:22.5px" width="14" height="12" viewBox="0 0 14 12"><path d="M3 1 C2 5 5 9 11 10 L12 8 C7 7 5 5 5 1Z" fill="#8ab0e0"/><circle cx="4" cy="2" r="1.5" fill="#e0ecf8"/></svg>
<div class="t" style="left:769.53px;top:34.60px;font-size:5.8px;color:#bcbcbc;font-family:'Liberation Sans',sans-serif;transform:scaleX(0.8037);transform-origin:0 0;">Caustic Light</div>
<svg class="a" style="left:807px;top:22.5px" width="14" height="12" viewBox="0 0 14 12"><path d="M1 3 L6 1 L12 10 L6 11Z" fill="#b8c040"/><path d="M4 4 L9 9" stroke="#e0e860" stroke-width="1"/></svg>
<div class="t" style="left:802.24px;top:34.60px;font-size:5.8px;color:#bcbcbc;font-family:'Liberation Sans',sans-serif;transform:scaleX(0.8014);transform-origin:0 0;">Portal Light</div>
<svg class="a" style="left:840px;top:22.5px" width="14" height="12" viewBox="0 0 14 12"><circle cx="7" cy="5" r="4" fill="#d8ecec"/><rect x="5" y="8.5" width="4" height="3" fill="#b0b8b8"/><circle cx="6" cy="4" r="1.5" fill="#fff"/></svg>
<div class="t" style="left:832.71px;top:34.60px;font-size:5.8px;color:#bcbcbc;font-family:'Liberation Sans',sans-serif;transform:scaleX(0.8061);transform-origin:0 0;">Ambient Light</div>
<svg class="a" style="left:875px;top:21px" width="14" height="12" viewBox="0 0 14 12"><rect x="1" y="4" width="12" height="6" rx="2" fill="#8a9aa4"/><circle cx="4.5" cy="7" r="2" fill="#222"/><circle cx="9.5" cy="7" r="2" fill="#222"/><rect x="3" y="1" width="8" height="3" fill="#bbb"/></svg>
<div class="t" style="left:875.14px;top:31.60px;font-size:5.8px;color:#bcbcbc;font-family:'Liberation Sans',sans-serif;transform:scaleX(0.8031);transform-origin:0 0;">Stereo</div>
<div class="t" style="left:873.69px;top:36.60px;font-size:5.8px;color:#bcbcbc;font-family:'Liberation Sans',sans-serif;transform:scaleX(0.8058);transform-origin:0 0;">Camera</div>
<svg class="a" style="left:906.7px;top:22.5px" width="14" height="12" viewBox="0 0 14 12"><path d="M2 6 L11 3 L13 6 L13 10 L3 11Z" fill="#7a8488"/><rect x="7" y="0" width="1.5" height="4" fill="#aaa"/><path d="M3 9 L12 8" stroke="#333"/></svg>
<div class="t" style="left:901.84px;top:34.60px;font-size:5.8px;color:#bcbcbc;font-family:'Liberation Sans',sans-serif;transform:scaleX(0.7830);transform-origin:0 0;">VR Camera</div>
<svg class="a" style="left:932.6px;top:22.5px" width="14" height="12" viewBox="0 0 14 12"><path d="M3 6 L10 4 L12 8 L5 11Z" fill="#e0e0e0"/><path d="M6 6 L8 1" stroke="#ddd" stroke-width="1.2"/><path d="M5 8 L10 7" stroke="#888" stroke-width="0.6"/></svg>
<div class="t" style="left:930.60px;top:34.60px;font-size:5.8px;color:#bcbcbc;font-family:'Liberation Sans',sans-serif;transform:scaleX(0.8091);transform-origin:0 0;">Switcher</div>
<svg class="a" style="left:962.5px;top:21px" width="14" height="12" viewBox="0 0 14 12"><path d="M1 9 C1 3 3 2 5 2 L9 2 C11 2 13 3 13 9 L10 8 L4 8Z" fill="#f0f0f0"/><circle cx="4" cy="5" r="1" fill="#40a040"/><circle cx="10" cy="5" r="1" fill="#c03030"/></svg>
<div class="t" style="left:959.20px;top:31.60px;font-size:5.8px;color:#bcbcbc;font-family:'Liberation Sans',sans-serif;transform:scaleX(0.8087);transform-origin:0 0;">Gamepad</div>
<div class="t" style="left:961.19px;top:36.60px;font-size:5.8px;color:#bcbcbc;font-family:'Liberation Sans',sans-serif;transform:scaleX(0.8058);transform-origin:0 0;">Camera</div>
<div class="a" style="left:0px;top:43px;width:699px;height:10px;background:#262626;"></div>
<div class="a" style="left:2.5px;top:43.5px;width:43.5px;height:9.5px;background:#3a3a3a;border-radius:2px 2px 0 0;"></div>
<div class="t" style="left:5.80px;top:46.55px;font-size:5.9px;color:#c4c4c4;font-family:'Liberation Sans',sans-serif;transform:scaleX(0.8631);transform-origin:0 0;">Scene View</div>
<div class="a" style="left:40.5px;top:47.5px;width:2px;height:2px;background:#ddd;border-radius:1px;"></div>
<div class="a" style="left:47px;top:44px;width:53px;height:9px;background:#2c2c2c;border-radius:2px 2px 0 0;"></div>
<div class="t" style="left:50.30px;top:46.55px;font-size:5.9px;color:#c4c4c4;font-family:'Liberation Sans',sans-serif;transform:scaleX(0.9240);transform-origin:0 0;">Animation Editor</div>
<div class="a" style="left:97px;top:47.5px;width:2px;height:2px;background:#ddd;border-radius:1px;"></div>
<div class="a" style="left:677px;top:46px;width:6px;height:4.5px;background:#e8e8e8;"></div>
<div class="a" style="left:677px;top:46px;width:6px;height:1px;background:#fff;"></div>
<svg class="a" style="left:688px;top:46px;" width="5" height="4" viewBox="0 0 5 4"><path d="M0 0 L5 0 L2.5 3.5Z" fill="#e0e0e0"/></svg>
<div class="a" style="left:0px;top:53px;width:695px;height:17px;background:#3a3a3a;"></div>
<div class="a" style="left:0px;top:43px;width:2.5px;height:467px;background:#262626;"></div>
<svg class="a" style="left:6px;top:58.5px;" width="8" height="6" viewBox="0 0 8 6"><path d="M0 3 L3 0 L3 2 L7 2 L7 4 L3 4 L3 6Z" fill="#5e5e5e"/></svg>
<svg class="a" style="left:18.5px;top:58.5px;" width="8" height="6" viewBox="0 0 8 6"><path d="M7 3 L4 0 L4 2 L0 2 L0 4 L4 4 L4 6Z" fill="#5e5e5e"/></svg>
<div class="a" style="left:31px;top:55.7px;width:590px;height:13px;background:#313131;border:1px solid #2a2a2a;border-radius:2px;box-shadow:inset 0 1px 0 #262626;"></div>
<div class="a" style="left:613px;top:56.5px;width:8px;height:11.5px;background:#2b2b2b;"></div>
<svg class="a" style="left:615px;top:60px;" width="5" height="4" viewBox="0 0 5 4"><path d="M0 0 L4 0 L2 3Z" fill="#999"/></svg>
<svg class="a" style="left:34.5px;top:58px;" width="9" height="9" viewBox="0 0 9 9"><rect x="0" y="0" width="2" height="2" fill="#ddd"/><rect x="1" y="4" width="6" height="4" fill="#888"/><rect x="2" y="5" width="2" height="1" fill="#ccc"/></svg>
<div class="t" style="left:46.00px;top:58.25px;font-size:7.5px;color:#d8d8d8;font-family:'Liberation Sans',sans-serif;transform:scaleX(0.9491);transform-origin:0 0;">obj</div>
<svg class="a" style="left:627px;top:58.0px;" width="10" height="7" viewBox="0 0 10 7"><path d="M0 3.5 L4 3.5" stroke="#e0e0e0" stroke-width="1.2"/><path d="M3.5 0.5 L8 2 L8 5 L3.5 6.5Z" fill="#e0e0e0"/><path d="M8.5 0 L8.5 7" stroke="#e0e0e0" stroke-width="1.3"/></svg>
<div class="a" style="left:638.5px;top:57.5px;width:9px;height:9px;border-radius:50%;background:radial-gradient(circle,#7090c0 12%,#2c3c58 30%,#34486a 75%);border:1px solid #7a92b0"></div>
<svg class="a" style="left:656px;top:57px;" width="10" height="10" viewBox="0 0 10 10"><path d="M1 3 L5 1 L9 3 L9 8 L5 10 L1 8Z" fill="#8fa4ae"/><path d="M1 3 L5 1 L9 3 L5 5Z" fill="#c8d4da"/></svg>
<svg class="a" style="left:662px;top:65px;" width="4" height="3" viewBox="0 0 4 3"><path d="M0 0 L4 0 L2 2.5Z" fill="#bbb"/></svg>
<svg class="a" style="left:669px;top:57px;" width="11" height="10" viewBox="0 0 11 10"><rect x="0.5" y="0.5" width="4" height="9" fill="none" stroke="#888" stroke-width="0.8"/><circle cx="6.5" cy="5.5" r="3.5" fill="#3c7ac8"/><circle cx="5.5" cy="4.5" r="1.2" fill="#9cc"/></svg>
<svg class="a" style="left:676px;top:65px;" width="4" height="3" viewBox="0 0 4 3"><path d="M0 0 L4 0 L2 2.5Z" fill="#bbb"/></svg>
<div class="a" style="left:683px;top:57px;width:8px;height:9px;background:#e8e8e8;border:1px solid #999;"></div>
<svg class="a" style="left:689px;top:65px;" width="4" height="3" viewBox="0 0 4 3"><path d="M0 0 L4 0 L2 2.5Z" fill="#bbb"/></svg>
<div class="a" style="left:0px;top:70px;width:695px;height:1px;background:#262626;"></div>
<div class="a" style="left:2.5px;top:71px;width:692px;height:17px;background:#2f2f2f;"></div>
<div class="a" style="left:9px;top:72px;width:685px;height:1px;background:#3c3c3c;"></div>
<div class="a" style="left:3px;top:72.5px;width:5.5px;height:15px;background:#3c3c3c;border:1px solid #2a2a2a;"></div>
<svg class="a" style="left:4px;top:73.5px;" width="4" height="3" viewBox="0 0 4 3"><path d="M0 3 L2 0 L4 3Z" fill="#111"/></svg>
<svg class="a" style="left:12px;top:74.5px;" width="9" height="11" viewBox="0 0 9 11"><path d="M1 0 L1 8 L3 6.5 L5 10 L6.3 9.3 L4.5 6 L7.5 6Z" fill="#111" stroke="#bbb" stroke-width="0.7"/></svg>
<svg class="a" style="left:17px;top:83.5px;" width="4" height="3" viewBox="0 0 4 3"><path d="M0 0 L4 0 L2 2.5Z" fill="#bbb"/></svg>
<div class="t" style="left:22.00px;top:77.75px;font-size:6.5px;color:#dcdcdc;font-family:'Liberation Sans',sans-serif;font-weight:bold;transform:scaleX(0.8821);transform-origin:0 0;">Show Handle</div>
<svg class="a" style="left:670px;top:75px;" width="10" height="11" viewBox="0 0 10 11"><circle cx="2.5" cy="2" r="1.3" fill="#6a9ad0"/><rect x="1" y="3.5" width="3" height="2.5" fill="#6a9ad0"/><circle cx="2.5" cy="7.5" r="1.3" fill="#6a9ad0"/><rect x="1" y="9" width="3" height="2" fill="#6a9ad0"/><circle cx="6.5" cy="4.5" r="1.3" fill="#6a9ad0"/><rect x="5" y="6" width="3" height="2.5" fill="#6a9ad0"/></svg>
<svg class="a" style="left:676px;top:84px;" width="5" height="3" viewBox="0 0 5 3"><path d="M0 0 L5 0 L2.5 2.5Z" fill="#bbb"/></svg>
<svg class="a" style="left:683px;top:75px;" width="9" height="9" viewBox="0 0 9 9"><circle cx="4.5" cy="4.5" r="4.0" fill="#1e1e1e" stroke="#e0e0e0" stroke-width="0.9"/><path d="M2.9 3.3 A1.6 1.5 0 1 1 4.8 4.8 L4.5 5.5" fill="none" stroke="#e8e8e8" stroke-width="1.1"/><circle cx="4.5" cy="6.8" r="0.6" fill="#e8e8e8"/></svg>
<div class="a" style="left:2.5px;top:88px;width:17.5px;height:422px;background:#3a3a3a;"></div>
<div class="a" style="left:3px;top:88px;width:17px;height:4.5px;background:#444;border:1px solid #2a2a2a;"></div>
<div class="a" style="left:3.5px;top:89px;width:2.5px;height:2.5px;background:#000;"></div>
<div class="a" style="left:20px;top:88px;width:660px;height:422px;background:linear-gradient(#64818d 0%,#748d97 20%,#8c9ca1 50%,#a2adae 75%,#b8c1c0 100%);"></div>
<div class="a" style="left:680px;top:88px;width:14.5px;height:422px;background:#3a3a3a;"></div>
<div class="a" style="left:681px;top:89px;width:13px;height:3.5px;background:#474747;"></div>
<div class="a" style="left:691px;top:89.5px;width:2.5px;height:2.5px;background:#000;"></div>
<div class="a" style="left:694.5px;top:43px;width:4.5px;height:467px;background:#2a2a2a;"></div>
<div class="a" style="left:695.5px;top:88px;width:2.5px;height:422px;background:#353535;"></div>
<div class="a" style="left:613px;top:89.7px;width:28px;height:10px;border-radius:5px;background:rgba(60,70,75,.35);border:1px solid rgba(200,210,215,.45)"></div>
<div class="t" style="left:617.50px;top:91.85px;font-size:6.3px;color:#e6ecee;font-family:'Liberation Sans',sans-serif;transform:scaleX(0.8506);transform-origin:0 0;">Persp</div>
<svg class="a" style="left:632.7px;top:94.5px;" width="4" height="3" viewBox="0 0 4 3"><path d="M0 0 L4 0 L2 2.5Z" fill="#e6ecee"/></svg>
<div class="a" style="left:645px;top:89.7px;width:32px;height:10px;border-radius:5px;background:rgba(60,70,75,.35);border:1px solid rgba(200,210,215,.45)"></div>
<div class="t" style="left:649.50px;top:91.85px;font-size:6.3px;color:#e6ecee;font-family:'Liberation Sans',sans-serif;transform:scaleX(0.8753);transform-origin:0 0;">No cam</div>
<svg class="a" style="left:669.7px;top:94.5px;" width="4" height="3" viewBox="0 0 4 3"><path d="M0 0 L4 0 L2 2.5Z" fill="#e6ecee"/></svg>
<div class="t" style="left:268.00px;top:500.75px;font-size:6.5px;color:#2a2ad0;font-family:'Liberation Sans',sans-serif;font-weight:bold;transform:scaleX(0.9106);transform-origin:0 0;">Select the geometry, then choose an operation to perform.</div>
<svg class="a" style="left:24px;top:488px;" width="20" height="16" viewBox="0 0 20 16"><line x1="8" y1="11" x2="8" y2="3" stroke="#40c040" stroke-width="1"/><line x1="8" y1="11" x2="15" y2="13" stroke="#d04040" stroke-width="1"/><line x1="8" y1="11" x2="2" y2="13" stroke="#3030e0" stroke-width="1.2"/><text x="9" y="4" font-size="4" fill="#40c040" font-family="Liberation Sans">y</text><text x="14" y="13" font-size="4" fill="#d04040" font-family="Liberation Sans">x</text></svg>
<div class="a" style="left:4.7px;top:96.7px;width:13.3px;height:13.299999999999997px;background:#c8901c;border:1px solid #a87010;border-radius:1px;"></div>
<svg class="a" style="left:5.800000000000001px;top:97.8px;" width="11" height="11" viewBox="0 0 11 11"><path d="M1 10 L5 2 L9 10Z" fill="#f0e040"/><circle cx="7" cy="4" r="3" fill="#666" stroke="#222" stroke-width="0.5"/></svg>
<svg class="a" style="left:15px;top:107px;" width="3" height="3" viewBox="0 0 3 3"><path d="M0 0 L3 1.5 L0 3Z" fill="#222"/></svg>
<div class="a" style="left:4.7px;top:111.3px;width:13.3px;height:10.600000000000009px;background:#333;border:1px solid #2c2c2c;"></div>
<svg class="a" style="left:6.800000000000001px;top:112.1px;" width="9" height="9" viewBox="0 0 9 9"><path d="M4.5 0 L9 4.5 L4.5 9 L0 4.5Z" fill="#888"/><path d="M0 4.5 L9 4.5 L4.5 9Z" fill="#e8d050"/><path d="M3 5 L6 5 L4.5 7Z" fill="#fff"/></svg>
<svg class="a" style="left:15px;top:118.5px;" width="3" height="3" viewBox="0 0 3 3"><path d="M0 0 L3 1.5 L0 3Z" fill="#aaa"/></svg>
<div class="a" style="left:4.7px;top:123px;width:13.3px;height:12px;background:#333;border:1px solid #2c2c2c;"></div>
<svg class="a" style="left:6.800000000000001px;top:124.5px;" width="9" height="9" viewBox="0 0 9 9"><path d="M4.5 0 L9 4.5 L4.5 9 L0 4.5Z" fill="#e0d020"/><path d="M4.5 2 L7 4.5 L4.5 7 L2 4.5Z" fill="#f0f080"/></svg>
<svg class="a" style="left:15px;top:131.5px;" width="3" height="3" viewBox="0 0 3 3"><path d="M0 0 L3 1.5 L0 3Z" fill="#aaa"/></svg>
<svg class="a" style="left:7.0px;top:144.0px;" width="9" height="12" viewBox="0 0 9 12"><path d="M1.5 0.5 L1.5 9 L3.5 7.3 L5.5 11 L7 10.2 L5.2 6.7 L8 6.5Z" fill="#111" stroke="#aaa" stroke-width="0.6"/></svg>
<svg class="a" style="left:15.5px;top:154px;" width="3" height="3" viewBox="0 0 3 3"><path d="M0 0 L3 1.5 L0 3Z" fill="#aaa"/></svg>
<svg class="a" style="left:6.800000000000001px;top:160.5px;" width="9" height="9" viewBox="0 0 9 9"><circle cx="4.5" cy="3.5" r="2.6" fill="#e8e8e8"/><path d="M0 6 L3 4.5 L3 8Z M9 6 L6 4.5 L6 8Z M2 8.5 L7 8.5 L4.5 6.5Z" fill="#c02020"/></svg>
<svg class="a" style="left:15.5px;top:167px;" width="3" height="3" viewBox="0 0 3 3"><path d="M0 0 L3 1.5 L0 3Z" fill="#aaa"/></svg>
<svg class="a" style="left:6.300000000000001px;top:175.0px;" width="10" height="9" viewBox="0 0 10 9"><circle cx="5" cy="3.8" r="3" fill="#ccc"/><path d="M0 6.5 L4 5 L4 9Z M10 6.5 L6 5 L6 9Z" fill="#c03010"/><path d="M3 8 L7 8 L5 6Z" fill="#e07020"/></svg>
<svg class="a" style="left:15.5px;top:182px;" width="3" height="3" viewBox="0 0 3 3"><path d="M0 0 L3 1.5 L0 3Z" fill="#aaa"/></svg>
<svg class="a" style="left:6.800000000000001px;top:189.0px;" width="9" height="11" viewBox="0 0 9 11"><path d="M4.5 0 L7.5 3 L1.5 3Z M4.5 11 L7.5 8 L1.5 8Z" fill="#c02020"/><circle cx="4.5" cy="5.5" r="2.6" fill="#999"/><path d="M0 9 L3 7 L3 10Z M9 9 L6 7 L6 10Z" fill="#c02020"/></svg>
<svg class="a" style="left:6.800000000000001px;top:204.5px;" width="9" height="10" viewBox="0 0 9 10"><path d="M1 1 L8 9 M8 1 L1 9" stroke="#ddd" stroke-width="1.2"/><path d="M4.5 0 L4.5 3 M1 5 L3 5 M6 5 L8 5" stroke="#c02020" stroke-width="1.2"/></svg>
<div class="a" style="left:4px;top:218px;width:14.5px;height:13.900000000000006px;background:#c8901c;border:1px solid #a87010;border-radius:1px;"></div>
<svg class="a" style="left:5.800000000000001px;top:219.5px;" width="11" height="11" viewBox="0 0 11 11"><path d="M5 1 L3 5 L7 5Z" fill="#30c030"/><path d="M5 5 L5 8" stroke="#30c030" stroke-width="1"/><path d="M1 10 L5 7 L10 9" stroke="#e8e8e8" stroke-width="1.2" fill="none"/><path d="M6 7 L10 6" stroke="#d03030" stroke-width="1.2"/></svg>
<svg class="a" style="left:15.5px;top:229px;" width="3" height="3" viewBox="0 0 3 3"><path d="M0 0 L3 1.5 L0 3Z" fill="#222"/></svg>
<svg class="a" style="left:5.800000000000001px;top:240.0px;" width="10" height="10" viewBox="0 0 10 10"><path d="M1 8 L1 5 A4 4 0 0 1 9 5 L9 8 L6.5 8 L6.5 5 A1.5 1.5 0 0 0 3.5 5 L3.5 8Z" fill="#d03030"/><rect x="1" y="7.5" width="2.5" height="2" fill="#eee"/><rect x="6.5" y="7.5" width="2.5" height="2" fill="#eee"/><rect x="4" y="5" width="6" height="5" fill="none" stroke="#ddd" stroke-width="0.7"/><path d="M7 5 L7 10 M4 7.5 L10 7.5" stroke="#ddd" stroke-width="0.5"/></svg>
<svg class="a" style="left:15.5px;top:249px;" width="3" height="3" viewBox="0 0 3 3"><path d="M0 0 L3 1.5 L0 3Z" fill="#aaa"/></svg>
<svg class="a" style="left:5.800000000000001px;top:254.5px;" width="10" height="10" viewBox="0 0 10 10"><path d="M1 8 L1 5 A4 4 0 0 1 9 5 L9 8 L6.5 8 L6.5 5 A1.5 1.5 0 0 0 3.5 5 L3.5 8Z" fill="#d03030"/><rect x="1" y="7.5" width="2.5" height="2" fill="#eee"/><rect x="6.5" y="7.5" width="2.5" height="2" fill="#eee"/><path d="M2 10 L10 6" stroke="#ddd" stroke-width="0.9"/></svg>
<svg class="a" style="left:15.5px;top:263px;" width="3" height="3" viewBox="0 0 3 3"><path d="M0 0 L3 1.5 L0 3Z" fill="#aaa"/></svg>
<svg class="a" style="left:5.800000000000001px;top:269.0px;" width="10" height="10" viewBox="0 0 10 10"><path d="M1 8 L1 5 A4 4 0 0 1 9 5 L9 8 L6.5 8 L6.5 5 A1.5 1.5 0 0 0 3.5 5 L3.5 8Z" fill="#d03030"/><rect x="1" y="7.5" width="2.5" height="2" fill="#eee"/><rect x="6.5" y="7.5" width="2.5" height="2" fill="#eee"/><circle cx="8" cy="8.5" r="1.6" fill="#ddd"/></svg>
<svg class="a" style="left:15.5px;top:277px;" width="3" height="3" viewBox="0 0 3 3"><path d="M0 0 L3 1.5 L0 3Z" fill="#aaa"/></svg>
<svg class="a" style="left:5.5px;top:279.0px;" width="11" height="12" viewBox="0 0 11 12"><path d="M1 9 L1 5.5 A4.5 4.5 0 0 1 10 5.5 L10 9 L7 9 L7 5.5 A1.5 1.5 0 0 0 4 5.5 L4 9Z" fill="#d83838"/><rect x="1" y="8.5" width="3" height="2.5" fill="#eee"/><rect x="7" y="8.5" width="3" height="2.5" fill="#eee"/></svg>
<svg class="a" style="left:15.5px;top:290px;" width="3" height="3" viewBox="0 0 3 3"><path d="M0 0 L3 1.5 L0 3Z" fill="#aaa"/></svg>
<svg class="a" style="left:6.5px;top:306.0px;" width="8" height="7" viewBox="0 0 8 7"><circle cx="4" cy="3.5" r="3" fill="#4a4a4a"/><circle cx="4" cy="3.5" r="1.2" fill="#777"/></svg>
<svg class="a" style="left:15.5px;top:312px;" width="3" height="3" viewBox="0 0 3 3"><path d="M0 0 L3 1.5 L0 3Z" fill="#aaa"/></svg>
<svg class="a" style="left:5.5px;top:314.5px;" width="11" height="11" viewBox="0 0 11 11"><circle cx="5" cy="5" r="4" fill="none" stroke="#ddd" stroke-width="1"/><rect x="5.5" y="5.5" width="5" height="5" fill="#c03030"/><rect x="6.5" y="6.5" width="3" height="3" fill="#eee"/></svg>
<svg class="a" style="left:5.5px;top:328.5px;" width="11" height="11" viewBox="0 0 11 11"><path d="M0.5 5 Q5.5 11 10.5 5 Q5.5 8 0.5 5Z" fill="#e8e8e8"/><path d="M1 6 Q5.5 10 10 6" fill="#eee"/><circle cx="5.5" cy="4" r="2" fill="#555"/></svg>
<svg class="a" style="left:15.5px;top:338px;" width="3" height="3" viewBox="0 0 3 3"><path d="M0 0 L3 1.5 L0 3Z" fill="#aaa"/></svg>
<svg class="a" style="left:5.5px;top:483.7px;" width="10" height="9" viewBox="0 0 10 9"><path d="M1 2 L7 0 L9 3 L8 7 L3 8 L0 5Z" fill="#e8e8e8"/><path d="M3 6 L7 6 L6 8 L3 8Z" fill="#633"/></svg>
<svg class="a" style="left:14.5px;top:491px;" width="3" height="3" viewBox="0 0 3 3"><path d="M0 0 L3 1.5 L0 3Z" fill="#aaa"/></svg>
<svg class="a" style="left:5.5px;top:498.0px;" width="11" height="8" viewBox="0 0 11 8"><ellipse cx="5.5" cy="4" rx="5" ry="3.5" fill="#bbb"/><ellipse cx="5.5" cy="4" rx="3" ry="2" fill="#888"/><circle cx="5.5" cy="4" r="1" fill="#ddd"/></svg>
<svg class="a" style="left:15px;top:505px;" width="3" height="3" viewBox="0 0 3 3"><path d="M0 0 L3 1.5 L0 3Z" fill="#aaa"/></svg>
<svg class="a" style="left:683.0px;top:99.7px;" width="9" height="6" viewBox="0 0 9 6"><path d="M0.5 3 Q4.5 -1 8.5 3 Q4.5 7 0.5 3Z" fill="#bbb"/><circle cx="4.5" cy="3" r="1.3" fill="#333"/></svg>
<svg class="a" style="left:691.5px;top:104px;" width="3" height="3" viewBox="0 0 3 3"><path d="M0 0 L3 1.5 L0 3Z" fill="#aaa"/></svg>
<svg class="a" style="left:683.0px;top:109.6px;" width="9" height="8" viewBox="0 0 9 8"><path d="M1 1 L8 4 L6 8 L0 6Z" fill="#3a8a3a"/><path d="M2 3 L6 5" stroke="#aae" stroke-width="0.7"/></svg>
<svg class="a" style="left:691.5px;top:116px;" width="3" height="3" viewBox="0 0 3 3"><path d="M0 0 L3 1.5 L0 3Z" fill="#aaa"/></svg>
<svg class="a" style="left:684.0px;top:123.80000000000001px;" width="7" height="9" viewBox="0 0 7 9"><rect x="0.5" y="4" width="6" height="5" fill="#e8e8e8"/><path d="M1.5 4 L1.5 2.5 A2 2 0 0 1 5.5 2.5 L5.5 4" fill="none" stroke="#e8e8e8" stroke-width="1"/></svg>
<svg class="a" style="left:684.0px;top:135.7px;" width="7" height="8" viewBox="0 0 7 8"><circle cx="3.5" cy="3" r="2.5" fill="none" stroke="#ccc" stroke-width="0.8"/><circle cx="3.5" cy="3" r="1" fill="#ccc"/><path d="M2 6 L5 6 L3.5 8Z" fill="#ccc"/></svg>
<svg class="a" style="left:682.5px;top:150.0px;" width="9" height="8" viewBox="0 0 9 8"><circle cx="4.5" cy="4" r="3.8" fill="#ccc"/><circle cx="5.5" cy="4" r="2.2" fill="#999"/></svg>
<svg class="a" style="left:691.5px;top:156px;" width="3" height="3" viewBox="0 0 3 3"><path d="M0 0 L3 1.5 L0 3Z" fill="#aaa"/></svg>
<div class="a" style="left:681.5px;top:161.2px;width:12.5px;height:10.5px;background:#c8901c;border:1px solid #a87010;border-radius:1px;"></div>
<svg class="a" style="left:684.0px;top:162.4px;" width="7" height="8" viewBox="0 0 7 8"><circle cx="3.5" cy="3" r="2.6" fill="#f0f0f0"/><rect x="2.5" y="5.5" width="2" height="2" fill="#ddd"/></svg>
<svg class="a" style="left:691.5px;top:169px;" width="3" height="3" viewBox="0 0 3 3"><path d="M0 0 L3 1.5 L0 3Z" fill="#222"/></svg>
<svg class="a" style="left:683.5px;top:175.0px;" width="8" height="9" viewBox="0 0 8 9"><circle cx="4" cy="3.5" r="2.8" fill="none" stroke="#e0d040" stroke-width="1"/><circle cx="4" cy="3.5" r="1.2" fill="#eee"/><path d="M3 7 L5 7 L4 9Z" fill="#ddd"/></svg>
<svg class="a" style="left:691.5px;top:182px;" width="3" height="3" viewBox="0 0 3 3"><path d="M0 0 L3 1.5 L0 3Z" fill="#aaa"/></svg>
<svg class="a" style="left:683.0px;top:188.6px;" width="9" height="10" viewBox="0 0 9 10"><circle cx="4.5" cy="3.5" r="2.8" fill="none" stroke="#e0d040" stroke-width="1"/><circle cx="4.5" cy="3.5" r="1.2" fill="#eee"/><path d="M0.5 9 L8.5 9 M4.5 6 L4.5 9" stroke="#ddd" stroke-width="0.8"/></svg>
<svg class="a" style="left:691.5px;top:196px;" width="3" height="3" viewBox="0 0 3 3"><path d="M0 0 L3 1.5 L0 3Z" fill="#aaa"/></svg>
<div class="a" style="left:681px;top:203px;width:13px;height:12px;background:#c8901c;border:1px solid #a87010;border-radius:1px;"></div>
<svg class="a" style="left:683.0px;top:204.5px;" width="9" height="9" viewBox="0 0 9 9"><circle cx="4.5" cy="4.5" r="4" fill="#eee"/><path d="M4.5 0.5 A4 4 0 0 1 8.5 4.5 L4.5 4.5Z M4.5 8.5 A4 4 0 0 1 0.5 4.5 L4.5 4.5Z" fill="#222"/></svg>
<svg class="a" style="left:691.5px;top:212px;" width="3" height="3" viewBox="0 0 3 3"><path d="M0 0 L3 1.5 L0 3Z" fill="#222"/></svg>
<svg class="a" style="left:683.0px;top:217.3px;" width="9" height="9" viewBox="0 0 9 9"><path d="M1 1 L6 3 L8 7 L3 8Z" fill="none" stroke="#ccc" stroke-width="0.8"/><circle cx="2" cy="2" r="1.2" fill="#ddd"/></svg>
<svg class="a" style="left:691px;top:225px;" width="3" height="3" viewBox="0 0 3 3"><path d="M0 0 L3 1.5 L0 3Z" fill="#aaa"/></svg>
<svg class="a" style="left:685.5px;top:236.0px;" width="4" height="4" viewBox="0 0 4 4"><circle cx="2" cy="2" r="1.7" fill="#eee"/></svg>
<svg class="a" style="left:684.0px;top:248.3px;" width="7" height="7" viewBox="0 0 7 7"><path d="M0.5 4 L2.5 6.5 L6.5 0.5" fill="none" stroke="#ddd" stroke-width="1.1"/></svg>
<svg class="a" style="left:683.5px;top:261.0px;" width="8" height="8" viewBox="0 0 8 8"><path d="M1 7 L6 2" stroke="#ddd" stroke-width="1.1"/><circle cx="6.5" cy="1.5" r="1.3" fill="#ddd"/></svg>
<svg class="a" style="left:683.0px;top:273.6px;" width="9" height="8" viewBox="0 0 9 8"><circle cx="1.5" cy="6" r="1.2" fill="#ddd"/><circle cx="3.5" cy="3.5" r="0.9" fill="#ddd"/><text x="4.5" y="4" font-size="4" fill="#ddd" font-family="Liberation Sans">12</text></svg>
<svg class="a" style="left:683.5px;top:288.5px;" width="8" height="7" viewBox="0 0 8 7"><path d="M1 6 L7 6 L6 2 L3 0 L2 3Z" fill="#e0e0e0"/></svg>
<svg class="a" style="left:683.5px;top:301.0px;" width="8" height="7" viewBox="0 0 8 7"><path d="M1 6 L7 6 L6 2 L3 0 L2 3Z" fill="#e0e0e0"/><rect x="3" y="3" width="3" height="1" fill="#555"/></svg>
<svg class="a" style="left:683.0px;top:314.8px;" width="9" height="9" viewBox="0 0 9 9"><path d="M1 9 L1 1 L8 1" fill="none" stroke="#ccc" stroke-width="1.1"/><circle cx="1" cy="1" r="1" fill="#ddd"/></svg>
<svg class="a" style="left:683.0px;top:328.3px;" width="9" height="9" viewBox="0 0 9 9"><path d="M1 1 L8 8 M8 1 L1 8" stroke="#ccc" stroke-width="0.9"/><circle cx="4.5" cy="4.5" r="1.5" fill="#ddd"/><path d="M0 4.5 L2 4.5 M7 4.5 L9 4.5" stroke="#aaa"/></svg>
<svg class="a" style="left:683.0px;top:342.7px;" width="9" height="9" viewBox="0 0 9 9"><path d="M4.5 4.5 L8.5 1 M4.5 4.5 L8.5 8 M4.5 4.5 L0.5 4.5" stroke="#ddd" stroke-width="1"/><circle cx="4.5" cy="4.5" r="1.1" fill="#ddd"/></svg>
<svg class="a" style="left:683.0px;top:355.3px;" width="9" height="9" viewBox="0 0 9 9"><circle cx="4.5" cy="4.5" r="4" fill="none" stroke="#ccc" stroke-width="0.8"/><rect x="2.5" y="2.5" width="4" height="4" fill="#ddd"/></svg>
<div class="t" style="left:683.73px;top:371.90px;font-size:5.2px;color:#bbb;font-family:'Liberation Sans',sans-serif;transform:scaleX(0.9000);transform-origin:0 0;">abc</div>
<div class="a" style="left:681px;top:380.8px;width:13px;height:11.0px;background:#c8901c;border:1px solid #a87010;border-radius:1px;"></div>
<svg class="a" style="left:683.0px;top:382.3px;" width="9" height="8" viewBox="0 0 9 8"><rect x="1" y="1" width="7" height="6" fill="#eee"/><path d="M1 4 L8 4" stroke="#555" stroke-width="0.8"/><rect x="3" y="5" width="3" height="1.5" fill="#555"/></svg>
<div class="a" style="left:681px;top:399.7px;width:13px;height:12.300000000000011px;background:#c8901c;border:1px solid #a87010;border-radius:1px;"></div>
<svg class="a" style="left:683.5px;top:401.0px;" width="8" height="9" viewBox="0 0 8 9"><path d="M4 9 L1 4 A3 3 0 1 1 7 4Z" fill="#eee"/><circle cx="4" cy="3.5" r="1.2" fill="#c8901c"/></svg>
<svg class="a" style="left:691.5px;top:409px;" width="3" height="3" viewBox="0 0 3 3"><path d="M0 0 L3 1.5 L0 3Z" fill="#222"/></svg>
<svg class="a" style="left:682.5px;top:472px;" width="9" height="9" viewBox="0 0 9 9"><circle cx="4.5" cy="4.5" r="4.0" fill="#3a3a3a" stroke="#e0e0e0" stroke-width="0.9"/><path d="M4.5 3.7 L4.5 6.9" stroke="#e8e8e8" stroke-width="1.2"/><circle cx="4.5" cy="2.3" r="0.65" fill="#e8e8e8"/></svg>
<div class="a" style="left:681px;top:484.7px;width:13px;height:9.800000000000011px;background:#c8901c;border:1px solid #a87010;border-radius:1px;"></div>
<svg class="a" style="left:684.0px;top:486.1px;" width="7" height="7" viewBox="0 0 7 7"><rect x="0" y="0" width="3" height="3" fill="#fff"/><rect x="4" y="0" width="3" height="3" fill="#fff"/><rect x="0" y="4" width="3" height="3" fill="#fff"/><rect x="4" y="4" width="3" height="3" fill="#fff"/></svg>
<svg class="a" style="left:682.5px;top:499.3px;" width="10" height="9" viewBox="0 0 10 9"><rect x="0.5" y="0.5" width="9" height="8" fill="#f0f0f0" stroke="#aaa" stroke-width="0.5"/><circle cx="5" cy="4.5" r="2" fill="#333"/><rect x="3" y="1.5" width="4" height="1.2" fill="#333"/></svg>
<svg class="a" style="left:691.5px;top:506px;" width="3" height="3" viewBox="0 0 3 3"><path d="M0 0 L3 1.5 L0 3Z" fill="#aaa"/></svg>
<div class="a" style="left:699px;top:43px;width:325px;height:10px;background:#262626;"></div>
<div class="a" style="left:699px;top:43.5px;width:37.6px;height:9.5px;background:#3a3a3a;border-radius:2px 2px 0 0;"></div>
<div class="t" style="left:702.00px;top:46.55px;font-size:5.9px;color:#9a9a9a;font-family:'Liberation Sans',sans-serif;transform:scaleX(0.9471);transform-origin:0 0;">mantra1</div>
<div class="a" style="left:731px;top:47.5px;width:2px;height:2px;background:#ddd;border-radius:1px;"></div>
<div class="a" style="left:737.5px;top:44px;width:38.5px;height:9px;background:#2c2c2c;border-radius:2px 2px 0 0;"></div>
<div class="t" style="left:741.00px;top:46.55px;font-size:5.9px;color:#c4c4c4;font-family:'Liberation Sans',sans-serif;transform:scaleX(0.9019);transform-origin:0 0;">Take List</div>
<div class="a" style="left:771px;top:47.5px;width:2px;height:2px;background:#ddd;border-radius:1px;"></div>
<div class="a" style="left:777px;top:44px;width:69px;height:9px;background:#2c2c2c;border-radius:2px 2px 0 0;"></div>
<div class="t" style="left:780.50px;top:46.55px;font-size:5.9px;color:#c4c4c4;font-family:'Liberation Sans',sans-serif;transform:scaleX(0.9167);transform-origin:0 0;">Performance Monitor</div>
<div class="a" style="left:838.5px;top:47.5px;width:2px;height:2px;background:#ddd;border-radius:1px;"></div>
<svg class="a" style="left:845.5px;top:44.5px;" width="7" height="7" viewBox="0 0 7 7"><path d="M3.5 0.5 L3.5 6.5 M0.5 3.5 L6.5 3.5" stroke="#ececec" stroke-width="1.8"/></svg>
<div class="a" style="left:1009px;top:46px;width:6px;height:4.5px;background:#e8e8e8;"></div>
<svg class="a" style="left:1019px;top:46px;" width="5" height="4" viewBox="0 0 5 4"><path d="M0 0 L5 0 L2.5 3.5Z" fill="#e0e0e0"/></svg>
<div class="a" style="left:699px;top:53px;width:325px;height:17px;background:#3a3a3a;"></div>
<svg class="a" style="left:702px;top:57.5px;" width="9" height="8" viewBox="0 0 9 8"><path d="M0 3.5 L3.5 0 L3.5 2 L8 2 L8 5 L3.5 5 L3.5 7Z" fill="#e8e8e8"/></svg>
<svg class="a" style="left:707px;top:64px;" width="3" height="3" viewBox="0 0 3 3"><path d="M0 0 L2.5 1.5 L0 3Z" fill="#bbb"/></svg>
<svg class="a" style="left:716px;top:58.5px;" width="8" height="6" viewBox="0 0 8 6"><path d="M7 3 L4 0 L4 2 L0 2 L0 4 L4 4 L4 6Z" fill="#5e5e5e"/></svg>
<div class="a" style="left:728px;top:55.5px;width:268.5px;height:13px;background:#313131;border:1px solid #2a2a2a;border-radius:2px;box-shadow:inset 0 1px 0 #262626;"></div>
<div class="a" style="left:988px;top:56.5px;width:8px;height:11px;background:#2b2b2b;"></div>
<svg class="a" style="left:990px;top:60px;" width="5" height="4" viewBox="0 0 5 4"><path d="M0 0 L4 0 L2 3Z" fill="#999"/></svg>
<div class="a" style="left:731px;top:57.5px;width:9px;height:8px;border-radius:50%;background:#ddd;border:1px solid #999"></div>
<div class="a" style="left:733px;top:59.5px;width:5px;height:3px;background:#888;border-radius:50%;"></div>
<div class="t" style="left:743.00px;top:58.25px;font-size:7.5px;color:#d8d8d8;font-family:'Liberation Sans',sans-serif;transform:scaleX(0.8920);transform-origin:0 0;">out</div>
<svg class="a" style="left:1003px;top:58.0px;" width="10" height="7" viewBox="0 0 10 7"><path d="M0 3.5 L4 3.5" stroke="#e0e0e0" stroke-width="1.2"/><path d="M3.5 0.5 L8 2 L8 5 L3.5 6.5Z" fill="#e0e0e0"/><path d="M8.5 0 L8.5 7" stroke="#e0e0e0" stroke-width="1.3"/></svg>
<div class="a" style="left:1014.5px;top:57.5px;width:9px;height:9px;border-radius:50%;background:radial-gradient(circle,#7090c0 12%,#2c3c58 30%,#34486a 75%);border:1px solid #7a92b0"></div>
<div class="a" style="left:699px;top:70px;width:325px;height:1px;background:#262626;"></div>
<div class="a" style="left:699px;top:71px;width:325px;height:206px;background:#3a3a3a;"></div>
<div class="a" style="left:699px;top:72px;width:38px;height:14px;background:#3d3d3d;"></div>
<svg class="a" style="left:701.5px;top:73.5px;" width="11" height="11" viewBox="0 0 11 11"><rect x="1" y="0" width="2" height="4" fill="#aaa"/><rect x="4" y="1" width="2" height="3" fill="#aaa"/><path d="M1 5 L8 5 L9 9 L1 9Z" fill="#bbb"/><path d="M4 6 L10 8 L8 10Z" fill="#d8d040"/></svg>
<div class="t" style="left:713.50px;top:76.85px;font-size:6.3px;color:#e4e4e4;font-family:'Liberation Sans',sans-serif;font-weight:bold;transform:scaleX(0.9170);transform-origin:0 0;">Mantra</div>
<div class="a" style="left:736.5px;top:73.5px;width:223.5px;height:11.5px;background:#121212;border:1px solid #262626;"></div>
<div class="t" style="left:738.50px;top:77.70px;font-size:6.6px;color:#f0f0f0;font-family:'Liberation Mono',monospace;transform:scaleX(0.9378);transform-origin:0 0;">mantra1</div>
<svg class="a" style="left:963px;top:74px;" width="10" height="10" viewBox="0 0 10 10"><circle cx="5" cy="5" r="3" fill="#ddd"/><path d="M5 0 L5 10 M0 5 L10 5 M1.5 1.5 L8.5 8.5 M8.5 1.5 L1.5 8.5" stroke="#ddd" stroke-width="1.2"/><circle cx="5" cy="5" r="1.3" fill="#3a3a3a"/></svg>
<svg class="a" style="left:976px;top:74px;" width="9" height="10" viewBox="0 0 9 10"><path d="M1 0.5 L3 0.5 L3 4 L6 4 L6 0.5 L8 0.5 L8 9.5 L6 9.5 L6 6 L3 6 L3 9.5 L1 9.5Z" fill="#234" stroke="#7aa0e0" stroke-width="0.9"/></svg>
<svg class="a" style="left:989px;top:74.5px;" width="9" height="9" viewBox="0 0 9 9"><circle cx="3.8" cy="3.8" r="2.8" fill="none" stroke="#ddd" stroke-width="1"/><line x1="6" y1="6" x2="8.5" y2="8.5" stroke="#ddd" stroke-width="1.4"/></svg>
<svg class="a" style="left:1001.5px;top:74.5px;" width="9" height="9" viewBox="0 0 9 9"><circle cx="4.5" cy="4.5" r="4.0" fill="#1e1e1e" stroke="#e0e0e0" stroke-width="0.9"/><path d="M4.5 3.7 L4.5 6.9" stroke="#e8e8e8" stroke-width="1.2"/><circle cx="4.5" cy="2.3" r="0.65" fill="#e8e8e8"/></svg>
<svg class="a" style="left:1014.5px;top:74.5px;" width="9" height="9" viewBox="0 0 9 9"><circle cx="4.5" cy="4.5" r="4.0" fill="#1e1e1e" stroke="#e0e0e0" stroke-width="0.9"/><path d="M2.9 3.3 A1.6 1.5 0 1 1 4.8 4.8 L4.5 5.5" fill="none" stroke="#e8e8e8" stroke-width="1.1"/><circle cx="4.5" cy="6.8" r="0.6" fill="#e8e8e8"/></svg>
<div class="a" style="left:699px;top:86.5px;width:318px;height:1px;background:#333;"></div>
<div class="a" style="left:1017px;top:87px;width:7px;height:190px;background:#2d2d2d;"></div>
<div class="a" style="left:1017.5px;top:87px;width:6px;height:63px;background:#474747;"></div>
<div class="a" style="left:1017.5px;top:256px;width:6px;height:9px;background:#3a3a3a;border:1px solid #2a2a2a;"></div>
<div class="a" style="left:1017.5px;top:265px;width:6px;height:9px;background:#3a3a3a;border:1px solid #2a2a2a;"></div>
<svg class="a" style="left:1019px;top:268px;" width="4" height="3" viewBox="0 0 4 3"><path d="M0 0 L4 0 L2 3Z" fill="#aaa"/></svg>
<div class="a" style="left:701px;top:88px;width:55.700000000000045px;height:10.5px;background:linear-gradient(#474747,#3b3b3b);border:1px solid #262626;border-radius:1.5px;"></div>
<div class="t" style="left:709.04px;top:90.75px;font-size:6.5px;color:#d0d0d0;font-family:'Liberation Sans',sans-serif;transform:scaleX(0.9216);transform-origin:0 0;">Render to Disk</div>
<div class="a" style="left:759.8px;top:88px;width:60.200000000000045px;height:10.5px;background:linear-gradient(#474747,#3b3b3b);border:1px solid #262626;border-radius:1.5px;"></div>
<div class="t" style="left:767.84px;top:90.75px;font-size:6.5px;color:#d0d0d0;font-family:'Liberation Sans',sans-serif;transform:scaleX(0.9112);transform-origin:0 0;">Render to MPlay</div>
<div class="a" style="left:822.7px;top:88px;width:95.29999999999995px;height:10.5px;background:linear-gradient(#474747,#3b3b3b);border:1px solid #262626;border-radius:1.5px;"></div>
<div class="t" style="left:830.22px;top:90.75px;font-size:6.5px;color:#d0d0d0;font-family:'Liberation Sans',sans-serif;transform:scaleX(0.9293);transform-origin:0 0;">Render to Disk in Background</div>
<div class="a" style="left:925.8px;top:88px;width:44.200000000000045px;height:10.5px;background:linear-gradient(#474747,#3b3b3b);border:1px solid #262626;border-radius:1.5px;"></div>
<div class="t" style="left:934.13px;top:90.75px;font-size:6.5px;color:#d0d0d0;font-family:'Liberation Sans',sans-serif;transform:scaleX(0.9294);transform-origin:0 0;">Controls...</div>
<div class="t" style="left:714.19px;top:104.75px;font-size:6.5px;color:#d4d4d4;font-family:'Liberation Sans',sans-serif;transform:scaleX(0.9278);transform-origin:0 0;">Valid Frame Range</div>
<div class="a" style="left:774px;top:102px;width:114px;height:10.799999999999997px;background:linear-gradient(#444,#3a3a3a);border:1px solid #2a2a2a;border-radius:1.5px;"></div>
<div class="a" style="left:877px;top:102.5px;width:10.5px;height:9.799999999999997px;background:#333;"></div>
<svg class="a" style="left:880px;top:103.9px;" width="5" height="7" viewBox="0 0 5 7"><path d="M0.5 3 L2.5 0.5 L4.5 3Z M0.5 4 L2.5 6.5 L4.5 4Z" fill="#aaa"/></svg>
<div class="t" style="left:780.00px;top:104.75px;font-size:6.5px;color:#d0d0d0;font-family:'Liberation Sans',sans-serif;transform:scaleX(0.9234);transform-origin:0 0;">Render Current Frame</div>
<div class="t" style="left:731.37px;top:118.75px;font-size:6.5px;color:#6a6a6a;font-family:'Liberation Sans',sans-serif;transform:scaleX(0.9138);transform-origin:0 0;">Start/End/Inc</div>
<div class="a" style="left:774px;top:115px;width:80px;height:12.4px;background:#353535;border:1px solid #303030;"></div>
<div class="t" style="left:776.50px;top:119.75px;font-size:6.5px;color:#5e5e5e;font-family:'Liberation Mono',monospace;transform:scaleX(0.8500);transform-origin:0 0;">1</div>
<div class="a" style="left:856px;top:115px;width:79px;height:12.4px;background:#353535;border:1px solid #303030;"></div>
<div class="t" style="left:858.50px;top:119.75px;font-size:6.5px;color:#5e5e5e;font-family:'Liberation Mono',monospace;transform:scaleX(0.8500);transform-origin:0 0;">240</div>
<div class="a" style="left:937px;top:115px;width:80px;height:12.4px;background:#353535;border:1px solid #303030;"></div>
<div class="t" style="left:939.50px;top:119.75px;font-size:6.5px;color:#5e5e5e;font-family:'Liberation Mono',monospace;transform:scaleX(0.8500);transform-origin:0 0;">1</div>
<div class="t" style="left:717.86px;top:132.75px;font-size:6.5px;color:#d4d4d4;font-family:'Liberation Sans',sans-serif;transform:scaleX(0.9281);transform-origin:0 0;">Render With Take</div>
<div class="a" style="left:774px;top:130px;width:49.5px;height:10.5px;background:linear-gradient(#444,#3a3a3a);border:1px solid #2a2a2a;border-radius:1.5px;"></div>
<div class="a" style="left:812.5px;top:130.5px;width:10.5px;height:9.5px;background:#333;"></div>
<svg class="a" style="left:815.5px;top:131.75px;" width="5" height="7" viewBox="0 0 5 7"><path d="M0.5 3 L2.5 0.5 L4.5 3Z M0.5 4 L2.5 6.5 L4.5 4Z" fill="#aaa"/></svg>
<div class="t" style="left:780.00px;top:132.75px;font-size:6.5px;color:#d0d0d0;font-family:'Liberation Sans',sans-serif;transform:scaleX(0.9265);transform-origin:0 0;">(Current)</div>
<div class="t" style="left:744.35px;top:147.75px;font-size:6.5px;color:#d4d4d4;font-family:'Liberation Sans',sans-serif;transform:scaleX(0.9236);transform-origin:0 0;">Camera</div>
<div class="a" style="left:774px;top:144px;width:217.5px;height:11.300000000000011px;background:#121212;border:1px solid #262626;"></div>
<div class="t" style="left:776.50px;top:148.70px;font-size:6.6px;color:#f0f0f0;font-family:'Liberation Mono',monospace;transform:scaleX(0.9258);transform-origin:0 0;">/obj/cam1</div>
<svg class="a" style="left:994px;top:146px;" width="10" height="8" viewBox="0 0 10 8"><path d="M1 5 C2 1 6 1 7 4 L9 3 L8 7 L5 6 L6.5 5 C6 3 3 3 2.5 6Z" fill="#ddd"/></svg>
<svg class="a" style="left:1007px;top:145px;" width="11" height="11" viewBox="0 0 11 11"><path d="M5 0 L5 10 M1 4 L9 4 M0 7 L10 7" stroke="#ddd" stroke-width="1.3"/><rect x="2" y="1" width="6" height="4" fill="#ddd"/></svg>
<div class="a" style="left:775px;top:157.5px;width:7px;height:7px;background:#222;border:1px solid #2c2c2c;"></div>
<div class="t" style="left:785.00px;top:158.75px;font-size:6.5px;color:#d0d0d0;font-family:'Liberation Sans',sans-serif;transform:scaleX(0.9272);transform-origin:0 0;">Override Camera Resolution</div>
<div class="a" style="left:700px;top:169px;width:27px;height:11px;background:#444;border:1px solid #262626;border-bottom:none;border-radius:1.5px 1.5px 0 0;"></div>
<div class="t" style="left:703.65px;top:172.80px;font-size:6.4px;color:#cfcfcf;font-family:'Liberation Sans',sans-serif;transform:scaleX(0.9390);transform-origin:0 0;">Images</div>
<div class="a" style="left:728px;top:169px;width:34px;height:11px;background:#363636;border:1px solid #262626;border-bottom:none;border-radius:1.5px 1.5px 0 0;"></div>
<div class="t" style="left:731.27px;top:172.80px;font-size:6.4px;color:#cfcfcf;font-family:'Liberation Sans',sans-serif;transform:scaleX(0.9297);transform-origin:0 0;">Rendering</div>
<div class="a" style="left:763px;top:169px;width:27px;height:11px;background:#363636;border:1px solid #262626;border-bottom:none;border-radius:1.5px 1.5px 0 0;"></div>
<div class="t" style="left:766.52px;top:172.80px;font-size:6.4px;color:#cfcfcf;font-family:'Liberation Sans',sans-serif;transform:scaleX(0.9202);transform-origin:0 0;">Objects</div>
<div class="a" style="left:791px;top:169px;width:28px;height:11px;background:#363636;border:1px solid #262626;border-bottom:none;border-radius:1.5px 1.5px 0 0;"></div>
<div class="t" style="left:795.99px;top:172.80px;font-size:6.4px;color:#cfcfcf;font-family:'Liberation Sans',sans-serif;transform:scaleX(0.9216);transform-origin:0 0;">Scripts</div>
<div class="a" style="left:820px;top:169px;width:21px;height:11px;background:#363636;border:1px solid #262626;border-bottom:none;border-radius:1.5px 1.5px 0 0;"></div>
<div class="t" style="left:822.69px;top:172.80px;font-size:6.4px;color:#cfcfcf;font-family:'Liberation Sans',sans-serif;transform:scaleX(0.9148);transform-origin:0 0;">Driver</div>
<div class="a" style="left:699px;top:180px;width:318px;height:96px;background:#3c3c3c;border:1px solid #2e2e2e;"></div>
<div class="t" style="left:731.25px;top:186.75px;font-size:6.5px;color:#d4d4d4;font-family:'Liberation Sans',sans-serif;transform:scaleX(0.9206);transform-origin:0 0;">Output Picture</div>
<div class="a" style="left:776px;top:183.2px;width:214px;height:12.5px;background:#121212;border:1px solid #262626;"></div>
<div class="a" style="left:776px;top:183.2px;width:214px;height:12.5px;border:1px solid #a08050"></div>
<div class="t" style="left:778.50px;top:187.75px;font-size:6.5px;color:#e6dcb8;font-family:'Liberation Mono',monospace;">$HIP</div>
<div class="t" style="left:794.10px;top:187.75px;font-size:6.5px;color:#d04848;font-family:'Liberation Mono',monospace;">/render/</div>
<div class="a" style="left:825.3000000000001px;top:185.3px;width:31.2px;height:8.5px;background:#e0b848;"></div>
<div class="t" style="left:825.30px;top:187.75px;font-size:6.5px;color:#2a2010;font-family:'Liberation Mono',monospace;">$HIPNAME</div>
<div class="t" style="left:856.50px;top:187.75px;font-size:6.5px;color:#d04848;font-family:'Liberation Mono',monospace;">.$OS.$F4.exr</div>
<div class="a" style="left:827px;top:189px;width:1px;height:6px;background:#ccc;"></div>
<div class="a" style="left:993px;top:183.5px;width:8px;height:11px;background:#333;"></div>
<svg class="a" style="left:995px;top:187.5px;" width="5" height="4" viewBox="0 0 5 4"><path d="M0 0 L4 0 L2 3Z" fill="#aaa"/></svg>
<svg class="a" style="left:1005px;top:184px;" width="10" height="11" viewBox="0 0 10 11"><path d="M1 1 L6 1 L8 3 L8 10 L1 10Z" fill="#ddd"/><path d="M5 5 L10 8 L7 8.5 L6 11Z" fill="#999"/></svg>
<div class="t" style="left:731.64px;top:200.75px;font-size:6.5px;color:#d4d4d4;font-family:'Liberation Sans',sans-serif;transform:scaleX(0.9192);transform-origin:0 0;">Output Device</div>
<div class="a" style="left:777px;top:198px;width:113px;height:12px;background:linear-gradient(#444,#3a3a3a);border:1px solid #2a2a2a;border-radius:1.5px;"></div>
<div class="a" style="left:879px;top:198.5px;width:10.5px;height:11px;background:#333;"></div>
<svg class="a" style="left:882px;top:200.5px;" width="5" height="7" viewBox="0 0 5 7"><path d="M0.5 3 L2.5 0.5 L4.5 3Z M0.5 4 L2.5 6.5 L4.5 4Z" fill="#aaa"/></svg>
<div class="t" style="left:783.00px;top:201.75px;font-size:6.5px;color:#d0d0d0;font-family:'Liberation Sans',sans-serif;transform:scaleX(0.9457);transform-origin:0 0;">Infer from filename</div>
<div class="a" style="left:778px;top:212px;width:7px;height:6.5px;background:#222;border:1px solid #2c2c2c;"></div>
<svg class="a" style="left:778.5px;top:211px;" width="8" height="8" viewBox="0 0 8 8"><path d="M1 4 L3 6.5 L7 0.5" fill="none" stroke="#eee" stroke-width="1.5"/></svg>
<div class="t" style="left:788.00px;top:212.75px;font-size:6.5px;color:#d0d0d0;font-family:'Liberation Sans',sans-serif;transform:scaleX(0.9339);transform-origin:0 0;">Create Intermediate Directories</div>
<div class="t" style="left:707.70px;top:225.75px;font-size:6.5px;color:#d4d4d4;font-family:'Liberation Sans',sans-serif;transform:scaleX(0.9247);transform-origin:0 0;">Skip Rendered Frames</div>
<div class="a" style="left:777px;top:222px;width:113px;height:12px;background:linear-gradient(#444,#3a3a3a);border:1px solid #2a2a2a;border-radius:1.5px;"></div>
<div class="a" style="left:879px;top:222.5px;width:10.5px;height:11px;background:#333;"></div>
<svg class="a" style="left:882px;top:224.5px;" width="5" height="7" viewBox="0 0 5 7"><path d="M0.5 3 L2.5 0.5 L4.5 3Z M0.5 4 L2.5 6.5 L4.5 4Z" fill="#aaa"/></svg>
<div class="t" style="left:783.00px;top:225.75px;font-size:6.5px;color:#d0d0d0;font-family:'Liberation Sans',sans-serif;transform:scaleX(0.9410);transform-origin:0 0;">Overwrite existing frames</div>
<div class="a" style="left:705px;top:236.5px;width:24px;height:11.0px;background:#444;border:1px solid #262626;border-bottom:none;border-radius:1.5px 1.5px 0 0;"></div>
<div class="t" style="left:708.20px;top:239.80px;font-size:6.4px;color:#cfcfcf;font-family:'Liberation Sans',sans-serif;transform:scaleX(0.9163);transform-origin:0 0;">Output</div>
<div class="a" style="left:730px;top:236.5px;width:58px;height:11.0px;background:#363636;border:1px solid #262626;border-bottom:none;border-radius:1.5px 1.5px 0 0;"></div>
<div class="t" style="left:733.14px;top:239.80px;font-size:6.4px;color:#cfcfcf;font-family:'Liberation Sans',sans-serif;transform:scaleX(0.9260);transform-origin:0 0;">Extra Image Planes</div>
<div class="a" style="left:789px;top:236.5px;width:41px;height:11.0px;background:#363636;border:1px solid #262626;border-bottom:none;border-radius:1.5px 1.5px 0 0;"></div>
<div class="t" style="left:792.89px;top:239.80px;font-size:6.4px;color:#cfcfcf;font-family:'Liberation Sans',sans-serif;transform:scaleX(0.9156);transform-origin:0 0;">Deep Output</div>
<div class="a" style="left:831px;top:236.5px;width:42px;height:11.0px;background:#363636;border:1px solid #262626;border-bottom:none;border-radius:1.5px 1.5px 0 0;"></div>
<div class="t" style="left:835.74px;top:239.80px;font-size:6.4px;color:#cfcfcf;font-family:'Liberation Sans',sans-serif;transform:scaleX(0.9328);transform-origin:0 0;">Cryptomatte</div>
<div class="a" style="left:874px;top:236.5px;width:33.5px;height:11.0px;background:#363636;border:1px solid #262626;border-bottom:none;border-radius:1.5px 1.5px 0 0;"></div>
<div class="t" style="left:877.37px;top:239.80px;font-size:6.4px;color:#cfcfcf;font-family:'Liberation Sans',sans-serif;transform:scaleX(0.9062);transform-origin:0 0;">Meta Data</div>
<div class="a" style="left:704px;top:247.5px;width:311.5px;height:27px;background:#3e3e3e;border:1px solid #2e2e2e;"></div>
<div class="t" style="left:743.66px;top:252.75px;font-size:6.5px;color:#d4d4d4;font-family:'Liberation Sans',sans-serif;transform:scaleX(0.9144);transform-origin:0 0;">Pixel Filter</div>
<div class="a" style="left:780px;top:249px;width:222px;height:13px;background:#121212;border:1px solid #262626;"></div>
<div class="t" style="left:782.50px;top:254.70px;font-size:6.6px;color:#f0f0f0;font-family:'Liberation Mono',monospace;transform:scaleX(0.9129);transform-origin:0 0;">gaussian -w 2</div>
<div class="a" style="left:1002px;top:249.5px;width:10px;height:12px;background:#333;"></div>
<svg class="a" style="left:1005px;top:254px;" width="5" height="4" viewBox="0 0 5 4"><path d="M0 0 L4 0 L2 3Z" fill="#aaa"/></svg>
<div class="t" style="left:736.10px;top:266.75px;font-size:6.5px;color:#d4d4d4;font-family:'Liberation Sans',sans-serif;transform:scaleX(0.9218);transform-origin:0 0;">Sample Filter</div>
<div class="a" style="left:779px;top:263px;width:69px;height:12px;background:linear-gradient(#444,#3a3a3a);border:1px solid #2a2a2a;border-radius:1.5px;"></div>
<div class="a" style="left:837px;top:263.5px;width:10.5px;height:11px;background:#333;"></div>
<svg class="a" style="left:840px;top:265.5px;" width="5" height="7" viewBox="0 0 5 7"><path d="M0.5 3 L2.5 0.5 L4.5 3Z M0.5 4 L2.5 6.5 L4.5 4Z" fill="#aaa"/></svg>
<div class="t" style="left:785.00px;top:266.75px;font-size:6.5px;color:#d0d0d0;font-family:'Liberation Sans',sans-serif;transform:scaleX(0.9250);transform-origin:0 0;">Opacity Filtering</div>
<div class="a" style="left:699px;top:277px;width:325px;height:2.5px;background:#262626;"></div>
<div class="a" style="left:940px;top:277.5px;width:6px;height:1px;background:#666;"></div>
<div class="a" style="left:699px;top:279.5px;width:325px;height:10.5px;background:#262626;"></div>
<div class="a" style="left:699.2px;top:280px;width:28px;height:10px;background:#3a3a3a;border-radius:2px 2px 0 0;"></div>
<div class="t" style="left:701.00px;top:283.55px;font-size:5.9px;color:#8a8a8a;font-family:'Liberation Sans',sans-serif;transform:scaleX(1.1178);transform-origin:0 0;">/out</div>
<div class="a" style="left:722px;top:284.5px;width:2px;height:2px;background:#ddd;border-radius:1px;"></div>
<div class="a" style="left:728px;top:280.5px;width:41px;height:9.5px;background:#2c2c2c;border-radius:2px 2px 0 0;"></div>
<div class="t" style="left:731.50px;top:283.55px;font-size:5.9px;color:#c4c4c4;font-family:'Liberation Sans',sans-serif;transform:scaleX(0.8767);transform-origin:0 0;">Tree View</div>
<div class="a" style="left:763px;top:284.5px;width:2px;height:2px;background:#ddd;border-radius:1px;"></div>
<div class="a" style="left:770px;top:280.5px;width:52.5px;height:9.5px;background:#2c2c2c;border-radius:2px 2px 0 0;"></div>
<div class="t" style="left:773.50px;top:283.55px;font-size:5.9px;color:#c4c4c4;font-family:'Liberation Sans',sans-serif;transform:scaleX(0.9221);transform-origin:0 0;">Material Palette</div>
<div class="a" style="left:816.5px;top:284.5px;width:2px;height:2px;background:#ddd;border-radius:1px;"></div>
<div class="a" style="left:823.5px;top:280.5px;width:53.5px;height:9.5px;background:#2c2c2c;border-radius:2px 2px 0 0;"></div>
<div class="t" style="left:827.00px;top:283.55px;font-size:5.9px;color:#c4c4c4;font-family:'Liberation Sans',sans-serif;transform:scaleX(0.8755);transform-origin:0 0;">Asset Browser</div>
<div class="a" style="left:869.5px;top:284.5px;width:2px;height:2px;background:#ddd;border-radius:1px;"></div>
<div class="a" style="left:877.5px;top:280.5px;width:2px;height:9.5px;background:#1e1e1e;"></div>
<svg class="a" style="left:877.5px;top:281.5px;" width="7" height="7" viewBox="0 0 7 7"><path d="M3.5 0.5 L3.5 6.5 M0.5 3.5 L6.5 3.5" stroke="#ececec" stroke-width="1.8"/></svg>
<div class="a" style="left:1009px;top:283px;width:6px;height:4.5px;background:#e8e8e8;"></div>
<svg class="a" style="left:1019px;top:283px;" width="5" height="4" viewBox="0 0 5 4"><path d="M0 0 L5 0 L2.5 3.5Z" fill="#e0e0e0"/></svg>
<div class="a" style="left:699px;top:290px;width:325px;height:17px;background:#3a3a3a;"></div>
<svg class="a" style="left:702px;top:294.5px;" width="9" height="8" viewBox="0 0 9 8"><path d="M0 3.5 L3.5 0 L3.5 2 L8 2 L8 5 L3.5 5 L3.5 7Z" fill="#e8e8e8"/></svg>
<svg class="a" style="left:707px;top:301px;" width="3" height="3" viewBox="0 0 3 3"><path d="M0 0 L2.5 1.5 L0 3Z" fill="#bbb"/></svg>
<svg class="a" style="left:716px;top:295.5px;" width="8" height="6" viewBox="0 0 8 6"><path d="M7 3 L4 0 L4 2 L0 2 L0 4 L4 4 L4 6Z" fill="#5e5e5e"/></svg>
<div class="a" style="left:728px;top:292.8px;width:269px;height:12.5px;background:#313131;border:1px solid #2a2a2a;border-radius:2px;box-shadow:inset 0 1px 0 #262626;"></div>
<div class="a" style="left:988px;top:293.5px;width:9px;height:11px;background:#2b2b2b;"></div>
<svg class="a" style="left:990.5px;top:297px;" width="5" height="4" viewBox="0 0 5 4"><path d="M0 0 L4 0 L2 3Z" fill="#999"/></svg>
<div class="a" style="left:731px;top:294.5px;width:9px;height:8px;border-radius:50%;background:#ddd;border:1px solid #999"></div>
<div class="a" style="left:733px;top:296.5px;width:5px;height:3px;background:#888;border-radius:50%;"></div>
<div class="t" style="left:743.00px;top:295.25px;font-size:7.5px;color:#d8d8d8;font-family:'Liberation Sans',sans-serif;transform:scaleX(0.8920);transform-origin:0 0;">out</div>
<svg class="a" style="left:1003px;top:295.0px;" width="10" height="7" viewBox="0 0 10 7"><path d="M0 3.5 L4 3.5" stroke="#e0e0e0" stroke-width="1.2"/><path d="M3.5 0.5 L8 2 L8 5 L3.5 6.5Z" fill="#e0e0e0"/><path d="M8.5 0 L8.5 7" stroke="#e0e0e0" stroke-width="1.3"/></svg>
<div class="a" style="left:1014.5px;top:294.5px;width:9px;height:9px;border-radius:50%;background:radial-gradient(circle,#7090c0 12%,#2c3c58 30%,#34486a 75%);border:1px solid #7a92b0"></div>
<div class="a" style="left:699px;top:307px;width:325px;height:1px;background:#2a2a2a;"></div>
<div class="a" style="left:699px;top:308px;width:325px;height:14.5px;background:#333;"></div>
<div class="a" style="left:700px;top:309px;width:4px;height:13px;background:#3c3c3c;border:1px solid #2a2a2a;"></div>
<div class="a" style="left:701px;top:309.5px;width:2px;height:2px;background:#000;"></div>
<div class="t" style="left:709.00px;top:311.50px;font-size:7px;color:#cccccc;font-family:'Liberation Sans',sans-serif;transform:scaleX(0.9233);transform-origin:0 0;">Add</div>
<div class="t" style="left:728.00px;top:311.50px;font-size:7px;color:#cccccc;font-family:'Liberation Sans',sans-serif;transform:scaleX(0.9948);transform-origin:0 0;">Edit</div>
<div class="t" style="left:747.00px;top:311.50px;font-size:7px;color:#cccccc;font-family:'Liberation Sans',sans-serif;transform:scaleX(0.9638);transform-origin:0 0;">Go</div>
<div class="t" style="left:763.00px;top:311.50px;font-size:7px;color:#cccccc;font-family:'Liberation Sans',sans-serif;transform:scaleX(0.9304);transform-origin:0 0;">View</div>
<div class="t" style="left:785.00px;top:311.50px;font-size:7px;color:#cccccc;font-family:'Liberation Sans',sans-serif;transform:scaleX(0.9791);transform-origin:0 0;">Tools</div>
<div class="t" style="left:808.00px;top:311.50px;font-size:7px;color:#cccccc;font-family:'Liberation Sans',sans-serif;transform:scaleX(0.9754);transform-origin:0 0;">Layout</div>
<div class="t" style="left:836.00px;top:311.50px;font-size:7px;color:#cccccc;font-family:'Liberation Sans',sans-serif;transform:scaleX(0.9724);transform-origin:0 0;">Help</div>
<svg class="a" style="left:859px;top:311px;" width="10" height="10" viewBox="0 0 10 10"><path d="M1 1 L9 9 M9 1 L1 9" stroke="#e0e0e0" stroke-width="1.6"/><circle cx="2" cy="2" r="1.5" fill="#e0e0e0"/></svg>
<svg class="a" style="left:873px;top:311px;" width="9" height="10" viewBox="0 0 9 10"><path d="M1 1 L1 9 L8 9 M3 3 L7 3 M3 6 L7 6" stroke="#bbb" stroke-width="1" fill="none"/></svg>
<div class="a" style="left:886px;top:311px;width:7px;height:9.5px;background:#e0e0e0;border:0.5px solid #888;background:repeating-linear-gradient(#e8e8e8 0 2px,#999 2px 2.6px);"></div>
<svg class="a" style="left:907px;top:311px;" width="9" height="9" viewBox="0 0 9 9"><rect x="0" y="0" width="9" height="9" fill="#ccc"/><rect x="1" y="1" width="3" height="3" fill="#e04040"/><rect x="5" y="1" width="3" height="3" fill="#40a040"/><rect x="1" y="5" width="3" height="3" fill="#4060e0"/><rect x="5" y="5" width="3" height="3" fill="#e0c040"/></svg>
<svg class="a" style="left:920px;top:311px;" width="9" height="9" viewBox="0 0 9 9"><rect x="0" y="0" width="9" height="9" fill="#555"/><path d="M1 1 h3 v3 h-3z M5 1 h3 v3 h-3z M1 5 h3 v3 h-3z M5 5 h3 v3 h-3z" fill="#aaa"/></svg>
<svg class="a" style="left:942px;top:311px;" width="9" height="9" viewBox="0 0 9 9"><rect x="0" y="0" width="9" height="9" fill="#777"/><path d="M1 1 h3 v3 h-3z M5 5 h3 v3 h-3z" fill="#ddd"/></svg>
<svg class="a" style="left:955px;top:311px;" width="9" height="9" viewBox="0 0 9 9"><rect x="0" y="0" width="9" height="9" rx="1" fill="#e8e040"/><path d="M2 3 L7 3 M2 5 L6 5" stroke="#555" stroke-width="0.8"/></svg>
<svg class="a" style="left:968px;top:311px;" width="9" height="9" viewBox="0 0 9 9"><rect x="0" y="0" width="9" height="9" fill="#4a90d0"/><path d="M1 7 L4 3 L8 8" fill="#80c080"/><circle cx="7.5" cy="7.5" r="1.5" fill="#222"/></svg>
<svg class="a" style="left:981px;top:311.5px;" width="9" height="8" viewBox="0 0 9 8"><rect x="0" y="2" width="9" height="6" rx="1" fill="#e8a040"/><rect x="2" y="0" width="5" height="3" fill="#c08030"/></svg>
<svg class="a" style="left:1001.5px;top:311px;" width="10" height="10" viewBox="0 0 10 10"><circle cx="4" cy="4" r="3" fill="none" stroke="#ddd" stroke-width="1.1"/><line x1="6.3" y1="6.3" x2="9" y2="9" stroke="#ddd" stroke-width="1.5"/></svg>
<svg class="a" style="left:1015px;top:311px;" width="9" height="9" viewBox="0 0 9 9"><rect x="0" y="1" width="9" height="8" fill="#eee"/><rect x="3" y="3" width="5" height="4" fill="#222"/></svg>
<div class="a" style="left:699px;top:321.5px;width:325px;height:1px;background:#252525;"></div>
<div class="a" style="left:699px;top:322.5px;width:325px;height:187.5px;background:#303030;"></div>
<div class="t" style="left:969.50px;top:333.25px;font-size:10.5px;color:#5a5a5a;font-family:'Liberation Sans',sans-serif;font-weight:bold;transform:scaleX(1.2425);transform-origin:0 0;">Outputs</div>
<div class="a" style="left:758px;top:348.5px;width:38px;height:4.5px;background:#cfcfcf;border-radius:2px 2px 0 0;"></div>
<div class="a" style="left:752.5px;top:352.5px;width:49px;height:18px;background:#c8b020;border-radius:3px;"></div>
<div class="a" style="left:754.5px;top:354.5px;width:45px;height:14px;background:linear-gradient(#e6e6e6,#c8c8c8);border-radius:1.5px;"></div>
<svg class="a" style="left:754.5px;top:354.5px;" width="45" height="14" viewBox="0 0 45 14"><path d="M10 0 L8 14 M17 0 L15 14 M37 0 L35 14" stroke="#999" stroke-width="0.6"/></svg>
<svg class="a" style="left:771px;top:355px;" width="12" height="12" viewBox="0 0 12 12"><rect x="2" y="1" width="2" height="3" fill="#556"/><rect x="5" y="1" width="2" height="3" fill="#556"/><path d="M2 5 L8 5 L8 9 L2 9Z" fill="#667"/><path d="M6 6 L11 8 L8 10Z" fill="#e8d040"/></svg>
<div class="a" style="left:774.5px;top:370px;width:5px;height:5px;border-radius:50%;background:#ddd;border:1px solid #888"></div>
<div class="t" style="left:804.50px;top:358.00px;font-size:9px;color:#e8e8e8;font-family:'Liberation Sans',sans-serif;transform:scaleX(1.0600);transform-origin:0 0;">mantra1</div>
<div class="t" style="left:804.50px;top:373.35px;font-size:8.3px;color:#5f93d8;font-family:'Liberation Sans',sans-serif;transform:scaleX(0.9532);transform-origin:0 0;">$HIPNAME.$OS.$F4.exr</div>
<div class="a" style="left:0px;top:510px;width:1024px;height:26px;background:#333;"></div>
<div class="a" style="left:0px;top:510px;width:1024px;height:1px;background:#262626;"></div>
<div class="a" style="left:4.5px;top:511px;width:1019.5px;height:1px;background:#4a4a4a;"></div>
<div class="a" style="left:0px;top:510px;width:4.5px;height:26px;background:#2a2a2a;"></div>
<div class="a" style="left:0px;top:527px;width:3px;height:5px;background:#111;"></div>
<div class="a" style="left:6.2px;top:516.2px;width:12.900000000000002px;height:14.4px;background:#3d3d3d;border:1px solid #2c2c2c;border-radius:1px;"></div>
<svg class="a" style="left:8.4px;top:519.4px;" width="8.5" height="8" viewBox="0 0 8.5 8"><rect x="0" y="1" width="1.3" height="6" fill="#e6e6e6"/><path d="M1.5 4 L5 1 L5 7Z M5 4 L8.5 1 L8.5 7Z" fill="#e6e6e6"/></svg>
<div class="a" style="left:20.5px;top:516.2px;width:13.0px;height:14.4px;background:#3d3d3d;border:1px solid #2c2c2c;border-radius:1px;"></div>
<svg class="a" style="left:22.75px;top:519.4px;" width="8.5" height="8" viewBox="0 0 8.5 8"><rect x="1" y="1" width="1.6" height="6" fill="#5ec040"/><path d="M3 4 L7 1 L7 7Z" fill="#e6e6e6"/></svg>
<div class="a" style="left:35.3px;top:516.2px;width:12.600000000000001px;height:14.4px;background:#3d3d3d;border:1px solid #2c2c2c;border-radius:1px;"></div>
<svg class="a" style="left:37.349999999999994px;top:519.4px;" width="8.5" height="8" viewBox="0 0 8.5 8"><path d="M1 4 L5 1 L5 7Z" fill="#e6e6e6"/><rect x="6" y="1" width="1.4" height="6" fill="#e6e6e6"/></svg>
<div class="a" style="left:49.5px;top:516.2px;width:12.700000000000003px;height:14.4px;background:#3d3d3d;border:1px solid #2c2c2c;border-radius:1px;"></div>
<svg class="a" style="left:51.6px;top:519.4px;" width="8.5" height="8" viewBox="0 0 8.5 8"><path d="M1.5 4 L7 0.5 L7 7.5Z" fill="#e6e6e6"/></svg>
<div class="a" style="left:63.9px;top:516.2px;width:14.000000000000007px;height:14.4px;background:#d4961c;border-radius:1px;"></div>
<div class="a" style="left:65.9px;top:518.2px;width:10.000000000000007px;height:10.4px;background:#3e3e3e;"></div>
<div class="a" style="left:67.9px;top:520px;width:6.000000000000007px;height:6.8px;background:#e6e6e6;"></div>
<div class="a" style="left:79px;top:516.2px;width:12.299999999999997px;height:14.4px;background:#3d3d3d;border:1px solid #2c2c2c;border-radius:1px;"></div>
<svg class="a" style="left:80.9px;top:519.4px;" width="8.5" height="8" viewBox="0 0 8.5 8"><path d="M7 4 L1.5 0.5 L1.5 7.5Z" fill="#e6e6e6"/></svg>
<div class="a" style="left:93px;top:516.2px;width:13px;height:14.4px;background:#3d3d3d;border:1px solid #2c2c2c;border-radius:1px;"></div>
<svg class="a" style="left:95.25px;top:519.4px;" width="8.5" height="8" viewBox="0 0 8.5 8"><rect x="0.6" y="1" width="1.4" height="6" fill="#e6e6e6"/><path d="M7 4 L3 1 L3 7Z" fill="#e6e6e6"/></svg>
<div class="a" style="left:107.3px;top:516.2px;width:12.700000000000003px;height:14.4px;background:#3d3d3d;border:1px solid #2c2c2c;border-radius:1px;"></div>
<svg class="a" style="left:109.4px;top:519.4px;" width="8.5" height="8" viewBox="0 0 8.5 8"><path d="M5 4 L1 1 L1 7Z" fill="#e6e6e6"/><rect x="5.4" y="1" width="1.6" height="6" fill="#5ec040"/></svg>
<div class="a" style="left:122px;top:516.2px;width:13px;height:14.4px;background:#3d3d3d;border:1px solid #2c2c2c;border-radius:1px;"></div>
<svg class="a" style="left:124.25px;top:519.4px;" width="8.5" height="8" viewBox="0 0 8.5 8"><path d="M0 1 L3.5 4 L0 7Z M3.5 1 L7 4 L3.5 7Z" fill="#e6e6e6"/><rect x="7.2" y="1" width="1.3" height="6" fill="#e6e6e6"/></svg>
<div class="a" style="left:138.8px;top:516.7px;width:25.4px;height:14.7px;background:#1c1c1c;"></div>
<div class="t" style="left:141.00px;top:522.75px;font-size:6.5px;color:#e0e0e0;font-family:'Liberation Mono',monospace;transform:scaleX(0.8500);transform-origin:0 0;">1</div>
<div class="a" style="left:167px;top:515.7px;width:21.6px;height:7.3px;background:#161616;"></div>
<div class="t" style="left:168.00px;top:517.75px;font-size:6.5px;color:#e0e0e0;font-family:'Liberation Mono',monospace;transform:scaleX(0.8500);transform-origin:0 0;">1</div>
<div class="a" style="left:167px;top:523px;width:21.6px;height:8px;background:#2e2e2e;"></div>
<div class="t" style="left:168.00px;top:525.75px;font-size:6.5px;color:#e0e0e0;font-family:'Liberation Mono',monospace;transform:scaleX(0.8500);transform-origin:0 0;">1</div>
<div class="a" style="left:188.5px;top:512px;width:745px;height:10.5px;background:#333;"></div>
<div class="a" style="left:188.5px;top:522.5px;width:745px;height:8px;background:#2b2b2b;"></div>
<div class="a" style="left:188.5px;top:519.8px;width:745px;height:2px;background:#5a5a5a;"></div>
<div class="a" style="left:203.66666666666669px;top:518.5px;width:0.9px;height:3.5px;background:#999;"></div>
<div class="a" style="left:222.34444444444446px;top:518.5px;width:0.9px;height:3.5px;background:#999;"></div>
<div class="a" style="left:241.02222222222224px;top:518.5px;width:0.9px;height:3.5px;background:#999;"></div>
<div class="a" style="left:259.6px;top:517.5px;width:1.2px;height:5.5px;background:#bbb;"></div>
<div class="t" style="left:260.60px;top:513.70px;font-size:5.6px;color:#cfcfcf;font-family:'Liberation Sans',sans-serif;transform:scaleX(0.8500);transform-origin:0 0;">24</div>
<div class="a" style="left:278.37777777777785px;top:518.5px;width:0.9px;height:3.5px;background:#999;"></div>
<div class="a" style="left:297.0555555555556px;top:518.5px;width:0.9px;height:3.5px;background:#999;"></div>
<div class="a" style="left:315.73333333333335px;top:518.5px;width:0.9px;height:3.5px;background:#999;"></div>
<div class="a" style="left:334.31111111111113px;top:517.5px;width:1.2px;height:5.5px;background:#bbb;"></div>
<div class="t" style="left:335.31px;top:513.70px;font-size:5.6px;color:#cfcfcf;font-family:'Liberation Sans',sans-serif;transform:scaleX(0.8500);transform-origin:0 0;">48</div>
<div class="a" style="left:353.08888888888896px;top:518.5px;width:0.9px;height:3.5px;background:#999;"></div>
<div class="a" style="left:371.7666666666667px;top:518.5px;width:0.9px;height:3.5px;background:#999;"></div>
<div class="a" style="left:390.44444444444446px;top:518.5px;width:0.9px;height:3.5px;background:#999;"></div>
<div class="a" style="left:409.02222222222224px;top:517.5px;width:1.2px;height:5.5px;background:#bbb;"></div>
<div class="t" style="left:410.02px;top:513.70px;font-size:5.6px;color:#cfcfcf;font-family:'Liberation Sans',sans-serif;transform:scaleX(0.8500);transform-origin:0 0;">72</div>
<div class="a" style="left:427.80000000000007px;top:518.5px;width:0.9px;height:3.5px;background:#999;"></div>
<div class="a" style="left:446.4777777777778px;top:518.5px;width:0.9px;height:3.5px;background:#999;"></div>
<div class="a" style="left:465.15555555555557px;top:518.5px;width:0.9px;height:3.5px;background:#999;"></div>
<div class="a" style="left:483.73333333333335px;top:517.5px;width:1.2px;height:5.5px;background:#bbb;"></div>
<div class="t" style="left:484.73px;top:513.70px;font-size:5.6px;color:#cfcfcf;font-family:'Liberation Sans',sans-serif;transform:scaleX(0.8500);transform-origin:0 0;">96</div>
<div class="a" style="left:502.5111111111112px;top:518.5px;width:0.9px;height:3.5px;background:#999;"></div>
<div class="a" style="left:521.188888888889px;top:518.5px;width:0.9px;height:3.5px;background:#999;"></div>
<div class="a" style="left:539.8666666666667px;top:518.5px;width:0.9px;height:3.5px;background:#999;"></div>
<div class="a" style="left:558.4444444444445px;top:517.5px;width:1.2px;height:5.5px;background:#bbb;"></div>
<div class="t" style="left:559.44px;top:513.70px;font-size:5.6px;color:#cfcfcf;font-family:'Liberation Sans',sans-serif;transform:scaleX(0.8500);transform-origin:0 0;">120</div>
<div class="a" style="left:577.2222222222223px;top:518.5px;width:0.9px;height:3.5px;background:#999;"></div>
<div class="a" style="left:595.9px;top:518.5px;width:0.9px;height:3.5px;background:#999;"></div>
<div class="a" style="left:614.5777777777778px;top:518.5px;width:0.9px;height:3.5px;background:#999;"></div>
<div class="a" style="left:633.1555555555556px;top:517.5px;width:1.2px;height:5.5px;background:#bbb;"></div>
<div class="t" style="left:634.16px;top:513.70px;font-size:5.6px;color:#cfcfcf;font-family:'Liberation Sans',sans-serif;transform:scaleX(0.8500);transform-origin:0 0;">144</div>
<div class="a" style="left:651.9333333333333px;top:518.5px;width:0.9px;height:3.5px;background:#999;"></div>
<div class="a" style="left:670.6111111111112px;top:518.5px;width:0.9px;height:3.5px;background:#999;"></div>
<div class="a" style="left:689.2888888888889px;top:518.5px;width:0.9px;height:3.5px;background:#999;"></div>
<div class="a" style="left:707.8666666666667px;top:517.5px;width:1.2px;height:5.5px;background:#bbb;"></div>
<div class="t" style="left:708.87px;top:513.70px;font-size:5.6px;color:#cfcfcf;font-family:'Liberation Sans',sans-serif;transform:scaleX(0.8500);transform-origin:0 0;">168</div>
<div class="a" style="left:726.6444444444445px;top:518.5px;width:0.9px;height:3.5px;background:#999;"></div>
<div class="a" style="left:745.3222222222222px;top:518.5px;width:0.9px;height:3.5px;background:#999;"></div>
<div class="a" style="left:764.0px;top:518.5px;width:0.9px;height:3.5px;background:#999;"></div>
<div class="a" style="left:782.5777777777778px;top:517.5px;width:1.2px;height:5.5px;background:#bbb;"></div>
<div class="t" style="left:783.58px;top:513.70px;font-size:5.6px;color:#cfcfcf;font-family:'Liberation Sans',sans-serif;transform:scaleX(0.8500);transform-origin:0 0;">192</div>
<div class="a" style="left:801.3555555555556px;top:518.5px;width:0.9px;height:3.5px;background:#999;"></div>
<div class="a" style="left:820.0333333333333px;top:518.5px;width:0.9px;height:3.5px;background:#999;"></div>
<div class="a" style="left:838.7111111111111px;top:518.5px;width:0.9px;height:3.5px;background:#999;"></div>
<div class="a" style="left:857.2888888888889px;top:517.5px;width:1.2px;height:5.5px;background:#bbb;"></div>
<div class="t" style="left:858.29px;top:513.70px;font-size:5.6px;color:#cfcfcf;font-family:'Liberation Sans',sans-serif;transform:scaleX(0.8500);transform-origin:0 0;">216</div>
<div class="a" style="left:876.0666666666666px;top:518.5px;width:0.9px;height:3.5px;background:#999;"></div>
<div class="a" style="left:894.7444444444444px;top:518.5px;width:0.9px;height:3.5px;background:#999;"></div>
<div class="a" style="left:913.4222222222222px;top:518.5px;width:0.9px;height:3.5px;background:#999;"></div>
<div class="a" style="left:932.0px;top:517.5px;width:1.2px;height:5.5px;background:#bbb;"></div>
<div class="t" style="left:930.50px;top:512.70px;font-size:5.6px;color:#cfcfcf;font-family:'Liberation Sans',sans-serif;transform:scaleX(0.8500);transform-origin:0 0;">2</div>
<div class="a" style="left:188.6px;top:512.4px;width:12.1px;height:9.8px;background:#0e0e0e;border:1px solid #d8d8d8;"></div>
<div class="t" style="left:192.71px;top:516.00px;font-size:7px;color:#f0f0f0;font-family:'Liberation Mono',monospace;transform:scaleX(0.9000);transform-origin:0 0;">1</div>
<div class="a" style="left:188.5px;top:530px;width:745px;height:5px;background:#434343;"></div>
<div class="a" style="left:189.5px;top:530.5px;width:11px;height:4px;background:#3a3a3a;border:1px solid #2c2c2c;"></div>
<div class="a" style="left:192.5px;top:532.3px;width:5px;height:0.8px;background:#777;"></div>
<div class="a" style="left:922px;top:530.5px;width:11px;height:4px;background:#3a3a3a;border:1px solid #2c2c2c;"></div>
<div class="a" style="left:925px;top:532.3px;width:5px;height:0.8px;background:#777;"></div>
<div class="a" style="left:936.3px;top:515.7px;width:21.7px;height:7.1px;background:#161616;"></div>
<div class="t" style="left:938.00px;top:516.60px;font-size:6.8px;color:#e8e8e8;font-family:'Liberation Sans',sans-serif;transform:scaleX(0.8500);transform-origin:0 0;">240</div>
<div class="t" style="left:938.00px;top:524.60px;font-size:6.8px;color:#e8e8e8;font-family:'Liberation Sans',sans-serif;transform:scaleX(0.8500);transform-origin:0 0;">240</div>
<div class="a" style="left:960px;top:516.2px;width:13.8px;height:14.2px;background:#444;border:1px solid #2a2a2a;border-radius:1px;"></div>
<svg class="a" style="left:962.5px;top:518.5px;" width="9" height="9" viewBox="0 0 9 9"><circle cx="2.8" cy="2.8" r="2.2" fill="none" stroke="#eee" stroke-width="1.4"/><path d="M4.3 4.3 L8.5 8.5 M6 6 L7.5 4.8 M7.2 7.2 L8.5 6" stroke="#eee" stroke-width="1.3"/></svg>
<div class="a" style="left:978px;top:516.5px;width:10.5px;height:12px;background:#3a3a3a;border:1px solid #2c2c2c;"></div>
<div class="a" style="left:990px;top:516.5px;width:10.5px;height:12px;background:#3a3a3a;border:1px solid #2c2c2c;"></div>
<div class="a" style="left:1002px;top:516.5px;width:10.5px;height:12px;background:#3a3a3a;border:1px solid #2c2c2c;"></div>
<div class="a" style="left:1013px;top:516.5px;width:10.5px;height:12px;background:#3a3a3a;border:1px solid #2c2c2c;"></div>
<svg class="a" style="left:979.5px;top:518.5px;" width="8" height="8" viewBox="0 0 8 8"><circle cx="4" cy="4" r="3.4" fill="none" stroke="#aaa" stroke-width="0.6"/><circle cx="4" cy="4" r="2" fill="#ddd"/><circle cx="4" cy="4" r="0.9" fill="#333"/></svg>
<svg class="a" style="left:991.5px;top:518.5px;" width="8" height="8" viewBox="0 0 8 8"><path d="M0.5 5 C0.5 1 7 1 7.5 4 L6 4" fill="none" stroke="#e0e0e0" stroke-width="1"/><path d="M0.5 6 L7.5 6" stroke="#e0e0e0" stroke-width="1"/></svg>
<svg class="a" style="left:1003.5px;top:518.5px;" width="8" height="8" viewBox="0 0 8 8"><ellipse cx="4.5" cy="4" rx="2.5" ry="3.5" fill="none" stroke="#8ab" stroke-width="0.8"/><path d="M3 1 L3 7 L1 5 L1 3Z" fill="#ddd"/></svg>
<svg class="a" style="left:1014.5px;top:518.5px;" width="9" height="8" viewBox="0 0 9 8"><rect x="1" y="2" width="5" height="5" fill="#eee"/><circle cx="6.5" cy="5" r="2" fill="#ccc"/></svg>
<div class="a" style="left:0px;top:535.5px;width:1024px;height:11.5px;background:#1c1c1c;"></div>
<div class="a" style="left:934.5px;top:535.5px;width:89.5px;height:11.5px;background:#262626;"></div>
<svg class="a" style="left:936.5px;top:537.5px;" width="10" height="9" viewBox="0 0 10 9"><ellipse cx="5" cy="4.5" rx="4.5" ry="3.8" fill="#e0e0e0"/><path d="M2 4 Q5 2 8 4" stroke="#aaa" stroke-width="0.6" fill="none"/></svg>
<svg class="a" style="left:951.5px;top:538px;" width="9" height="8" viewBox="0 0 9 8"><path d="M1.5 4 A3 3 0 0 1 7 2.5 M7.5 4 A3 3 0 0 1 2 5.5" fill="none" stroke="#555" stroke-width="1"/></svg>
<div class="a" style="left:963.5px;top:537px;width:50px;height:10px;background:#3a3a3a;border:1px solid #2c2c2c;"></div>
<div class="t" style="left:971.92px;top:539.75px;font-size:6.5px;color:#c8c8c8;font-family:'Liberation Sans',sans-serif;transform:scaleX(0.9175);transform-origin:0 0;">Auto Update</div>
<svg class="a" style="left:1017.5px;top:538px;" width="6" height="8" viewBox="0 0 6 8"><path d="M0.5 3 L2.5 0.5 L4.5 3Z M0.5 5 L2.5 7.5 L4.5 5Z" fill="#aaa"/></svg>
<div class="a" style="left:99px;top:41px;width:369px;height:295px;background:rgba(0,0,0,.25);border-radius:2px;filter:blur(1.5px);"></div>
<div class="a" style="left:101px;top:43px;width:364.5px;height:291px;background:#3a3a3a;border:1px solid #2a2a2a;border-right:2px solid #2a2a2a;"></div>
<div class="a" style="left:101px;top:43px;width:364.5px;height:17px;background:#ffffff;"></div>
<div class="a" style="left:101px;top:60px;width:364.5px;height:1px;background:#2a2a2a;"></div>
<svg class="a" style="left:105px;top:47px;" width="9.5" height="9.5" viewBox="0 0 9.5 9.5"><defs><linearGradient id="hg" x1="0" y1="1" x2="1" y2="0"><stop offset="0" stop-color="#f08a3a"/><stop offset="1" stop-color="#d8400c"/></linearGradient></defs><rect x="0" y="0" width="9.5" height="9.5" fill="url(#hg)"/><path d="M5.5 3.2 A2.6 2.6 0 1 0 6.2 6.2" fill="none" stroke="#fff" stroke-width="0.9"/><path d="M7.6 2 A4.4 4.4 0 1 0 8.4 7.6" fill="none" stroke="#ffe0c8" stroke-width="0.8"/><path d="M4.6 4.6 A1 1 0 1 0 5.6 5.8" fill="none" stroke="#fff" stroke-width="0.8"/></svg>
<div class="t" style="left:116.50px;top:48.50px;font-size:7px;color:#9a9a9a;font-family:'Liberation Sans',sans-serif;transform:scaleX(0.8547);transform-origin:0 0;">Variables</div>
<svg class="a" style="left:453.5px;top:48px;" width="7" height="7" viewBox="0 0 7 7"><path d="M0.5 0.5 L6.5 6.5 M6.5 0.5 L0.5 6.5" stroke="#666" stroke-width="0.8"/></svg>
<div class="a" style="left:105.5px;top:64.4px;width:100px;height:12.4px;background:#262626;border-radius:2px 2px 0 0;"></div>
<div class="a" style="left:106.5px;top:65.4px;width:26.0px;height:11.4px;background:#353535;border-radius:1.5px 1.5px 0 0;"></div>
<div class="t" style="left:110.25px;top:68.70px;font-size:6.6px;color:#c8c8c8;font-family:'Liberation Sans',sans-serif;transform:scaleX(0.8695);transform-origin:0 0;">Aliases</div>
<div class="a" style="left:133.5px;top:65.4px;width:31.0px;height:11.4px;background:#414141;border-radius:1.5px 1.5px 0 0;"></div>
<div class="t" style="left:137.00px;top:68.70px;font-size:6.6px;color:#c8c8c8;font-family:'Liberation Sans',sans-serif;transform:scaleX(0.8880);transform-origin:0 0;">Variables</div>
<div class="a" style="left:165.5px;top:65.4px;width:39.0px;height:11.4px;background:#353535;border-radius:1.5px 1.5px 0 0;"></div>
<div class="t" style="left:169.50px;top:68.70px;font-size:6.6px;color:#c8c8c8;font-family:'Liberation Sans',sans-serif;transform:scaleX(0.8623);transform-origin:0 0;">Expressions</div>
<div class="a" style="left:107.5px;top:77.3px;width:344.5px;height:216px;background:#2a2a2a;border:1px solid #222;"></div>
<div class="a" style="left:108.5px;top:78.3px;width:343px;height:8.7px;background:#2c2c2c;"></div>
<div class="a" style="left:108.5px;top:78.3px;width:67px;height:8.7px;background:linear-gradient(#2e2e2e,#282828);"></div>
<div class="a" style="left:176px;top:78.3px;width:275.5px;height:8.7px;background:linear-gradient(#2e2e2e,#282828);"></div>
<div class="a" style="left:175.5px;top:78.3px;width:1px;height:8.7px;background:#1e1e1e;"></div>
<div class="t" style="left:109.50px;top:79.70px;font-size:6.6px;color:#c8c8c8;font-family:'Liberation Sans',sans-serif;transform:scaleX(0.9455);transform-origin:0 0;">Variable</div>
<div class="t" style="left:178.00px;top:79.70px;font-size:6.6px;color:#c8c8c8;font-family:'Liberation Sans',sans-serif;transform:scaleX(0.9435);transform-origin:0 0;">Value</div>
<div class="a" style="left:108.5px;top:87.0px;width:343px;height:10.8px;background:#3a3a3a;"></div>
<div class="a" style="left:108.5px;top:97.75px;width:343px;height:10.8px;background:#323232;"></div>
<div class="a" style="left:108.5px;top:108.5px;width:343px;height:10.8px;background:#3a3a3a;"></div>
<div class="a" style="left:108.5px;top:119.25px;width:343px;height:10.8px;background:#323232;"></div>
<div class="a" style="left:108.5px;top:130.0px;width:343px;height:10.8px;background:#3a3a3a;"></div>
<div class="a" style="left:108.5px;top:140.75px;width:343px;height:10.8px;background:#323232;"></div>
<div class="a" style="left:108.5px;top:151.5px;width:343px;height:10.8px;background:#bd8a20;"></div>
<div class="a" style="left:108.5px;top:162.25px;width:343px;height:10.8px;background:#323232;"></div>
<div class="a" style="left:108.5px;top:173.0px;width:343px;height:10.8px;background:#3a3a3a;"></div>
<div class="a" style="left:108.5px;top:183.75px;width:343px;height:10.8px;background:#323232;"></div>
<div class="a" style="left:108.5px;top:194.5px;width:343px;height:10.8px;background:#3a3a3a;"></div>
<div class="a" style="left:108.5px;top:205.25px;width:343px;height:10.8px;background:#323232;"></div>
<div class="a" style="left:108.5px;top:216.0px;width:343px;height:10.8px;background:#3a3a3a;"></div>
<div class="a" style="left:108.5px;top:226.75px;width:343px;height:10.8px;background:#323232;"></div>
<div class="a" style="left:108.5px;top:237.5px;width:343px;height:10.8px;background:#3a3a3a;"></div>
<div class="t" style="left:109.50px;top:90.70px;font-size:6.6px;color:#cdcdcd;font-family:'Liberation Sans',sans-serif;transform:scaleX(0.8007);transform-origin:0 0;">ACTIVETAKE</div>
<div class="t" style="left:178.00px;top:90.70px;font-size:6.6px;color:#cdcdcd;font-family:'Liberation Sans',sans-serif;transform:scaleX(0.9000);transform-origin:0 0;">Main</div>
<div class="t" style="left:109.50px;top:101.70px;font-size:6.6px;color:#cdcdcd;font-family:'Liberation Sans',sans-serif;transform:scaleX(0.8200);transform-origin:0 0;">E</div>
<div class="t" style="left:178.00px;top:101.70px;font-size:6.6px;color:#cdcdcd;font-family:'Liberation Sans',sans-serif;transform:scaleX(0.8622);transform-origin:0 0;">2.7182818284590452354</div>
<div class="t" style="left:109.50px;top:112.70px;font-size:6.6px;color:#cdcdcd;font-family:'Liberation Sans',sans-serif;transform:scaleX(0.8200);transform-origin:0 0;">EYE</div>
<div class="t" style="left:178.00px;top:112.70px;font-size:6.6px;color:#cdcdcd;font-family:'Liberation Sans',sans-serif;transform:scaleX(0.9500);transform-origin:0 0;">stereo</div>
<div class="t" style="left:109.50px;top:123.70px;font-size:6.6px;color:#cdcdcd;font-family:'Liberation Sans',sans-serif;transform:scaleX(0.9181);transform-origin:0 0;">Gravity</div>
<div class="t" style="left:178.00px;top:123.70px;font-size:6.6px;color:#cdcdcd;font-family:'Liberation Sans',sans-serif;transform:scaleX(0.8669);transform-origin:0 0;">9.80665</div>
<div class="t" style="left:109.50px;top:133.70px;font-size:6.6px;color:#cdcdcd;font-family:'Liberation Sans',sans-serif;transform:scaleX(0.8200);transform-origin:0 0;">HIP</div>
<div class="t" style="left:178.00px;top:133.70px;font-size:6.6px;color:#cdcdcd;font-family:'Liberation Sans',sans-serif;transform:scaleX(0.9198);transform-origin:0 0;">C:/Users/Alleg/Documents/houdini16.5</div>
<div class="t" style="left:109.50px;top:144.70px;font-size:6.6px;color:#cdcdcd;font-family:'Liberation Sans',sans-serif;transform:scaleX(0.8200);transform-origin:0 0;">HIPFILE</div>
<div class="t" style="left:178.00px;top:144.70px;font-size:6.6px;color:#cdcdcd;font-family:'Liberation Sans',sans-serif;transform:scaleX(0.9267);transform-origin:0 0;">C:/Users/Alleg/Documents/houdini16.5/untitled.hip</div>
<div class="t" style="left:109.50px;top:155.70px;font-size:6.6px;color:#e9d2a0;font-family:'Liberation Sans',sans-serif;transform:scaleX(0.8200);transform-origin:0 0;">HIPNAME</div>
<div class="t" style="left:178.00px;top:155.70px;font-size:6.6px;color:#e9d2a0;font-family:'Liberation Sans',sans-serif;transform:scaleX(0.9500);transform-origin:0 0;">untitled</div>
<div class="t" style="left:109.50px;top:166.70px;font-size:6.6px;color:#cdcdcd;font-family:'Liberation Sans',sans-serif;transform:scaleX(0.8200);transform-origin:0 0;">JOB</div>
<div class="t" style="left:178.00px;top:166.70px;font-size:6.6px;color:#cdcdcd;font-family:'Liberation Sans',sans-serif;transform:scaleX(0.9071);transform-origin:0 0;">C:/Users/Alleg</div>
<div class="t" style="left:109.50px;top:176.70px;font-size:6.6px;color:#cdcdcd;font-family:'Liberation Sans',sans-serif;transform:scaleX(0.8200);transform-origin:0 0;">PI</div>
<div class="t" style="left:178.00px;top:176.70px;font-size:6.6px;color:#cdcdcd;font-family:'Liberation Sans',sans-serif;transform:scaleX(0.8622);transform-origin:0 0;">3.1415926535897932384</div>
<div class="t" style="left:109.50px;top:187.70px;font-size:6.6px;color:#cdcdcd;font-family:'Liberation Sans',sans-serif;transform:scaleX(0.8200);transform-origin:0 0;">POSE</div>
<div class="t" style="left:178.00px;top:187.70px;font-size:6.6px;color:#cdcdcd;font-family:'Liberation Sans',sans-serif;transform:scaleX(0.9252);transform-origin:0 0;">C:/Users/Alleg/Documents//houdini16.5/poselib</div>
<div class="t" style="left:109.50px;top:198.70px;font-size:6.6px;color:#cdcdcd;font-family:'Liberation Sans',sans-serif;transform:scaleX(0.8144);transform-origin:0 0;">_HIP_SAVEPLATFORM</div>
<div class="t" style="left:178.00px;top:198.70px;font-size:6.6px;color:#cdcdcd;font-family:'Liberation Sans',sans-serif;transform:scaleX(0.8940);transform-origin:0 0;">Windows 10.0.10586</div>
<div class="t" style="left:109.50px;top:209.70px;font-size:6.6px;color:#cdcdcd;font-family:'Liberation Sans',sans-serif;transform:scaleX(0.8198);transform-origin:0 0;">_HIP_SAVETIME</div>
<div class="t" style="left:178.00px;top:209.70px;font-size:6.6px;color:#cdcdcd;font-family:'Liberation Sans',sans-serif;transform:scaleX(0.8862);transform-origin:0 0;">Thu Jun 14 17:05:22 2018</div>
<div class="t" style="left:109.50px;top:219.70px;font-size:6.6px;color:#cdcdcd;font-family:'Liberation Sans',sans-serif;transform:scaleX(0.8056);transform-origin:0 0;">_HIP_SAVEVERSION</div>
<div class="t" style="left:178.00px;top:219.70px;font-size:6.6px;color:#cdcdcd;font-family:'Liberation Sans',sans-serif;transform:scaleX(0.8728);transform-origin:0 0;">16.5.442</div>
<div class="t" style="left:109.50px;top:230.70px;font-size:6.6px;color:#cdcdcd;font-family:'Liberation Sans',sans-serif;transform:scaleX(0.8155);transform-origin:0 0;">_HIP_SHELFTOOLCOUNT</div>
<div class="t" style="left:178.00px;top:230.70px;font-size:6.6px;color:#cdcdcd;font-family:'Liberation Sans',sans-serif;transform:scaleX(0.8600);transform-origin:0 0;">1</div>
<div class="t" style="left:109.50px;top:241.70px;font-size:6.6px;color:#cdcdcd;font-family:'Liberation Sans',sans-serif;transform:scaleX(0.9500);transform-origin:0 0;">status</div>
<div class="t" style="left:178.00px;top:241.70px;font-size:6.6px;color:#cdcdcd;font-family:'Liberation Sans',sans-serif;transform:scaleX(0.8600);transform-origin:0 0;">0</div>
<div class="a" style="left:452px;top:77.5px;width:7.5px;height:215.5px;background:#2c2c2c;border-left:1px solid #242424;"></div>
<div class="a" style="left:452.5px;top:78px;width:6.5px;height:51px;background:#3e3e3e;border-radius:1px;"></div>
<div class="a" style="left:453.5px;top:100px;width:4.5px;height:5px;background:repeating-linear-gradient(#2a2a2a 0 1px,#555 1px 2px);"></div>
<div class="a" style="left:452.5px;top:274px;width:6.5px;height:8px;background:#3c3c3c;border:1px solid #2a2a2a;"></div>
<svg class="a" style="left:454px;top:276.5px;" width="4" height="3" viewBox="0 0 4 3"><path d="M0 3 L2 0 L4 3Z" fill="#555"/></svg>
<div class="a" style="left:452.5px;top:282.5px;width:6.5px;height:8px;background:#3c3c3c;border:1px solid #2a2a2a;"></div>
<svg class="a" style="left:454px;top:285px;" width="4" height="3" viewBox="0 0 4 3"><path d="M0 0 L4 0 L2 3Z" fill="#bbb"/></svg>
<div class="a" style="left:107.5px;top:293px;width:353px;height:4.5px;background:#444;border:1px solid #2a2a2a;"></div>
<div class="a" style="left:107.5px;top:298.5px;width:147px;height:13px;background:#141414;border:1px solid #262626;"></div>
<div class="t" style="left:109.50px;top:303.80px;font-size:6.4px;color:#e0e0e0;font-family:'Liberation Mono',monospace;transform:scaleX(1.0415);transform-origin:0 0;">HIPNAME</div>
<div class="a" style="left:256px;top:298.5px;width:204.5px;height:13px;background:#141414;border:1px solid #262626;"></div>
<div class="t" style="left:258.50px;top:303.80px;font-size:6.4px;color:#e0e0e0;font-family:'Liberation Mono',monospace;transform:scaleX(0.9602);transform-origin:0 0;">untitled</div>
<div class="a" style="left:106.5px;top:316.5px;width:40.5px;height:12.0px;background:linear-gradient(#474747,#3a3a3a);border:1px solid #262626;border-radius:1.5px;box-shadow:inset 0 1px 0 rgba(255,255,255,.06);"></div>
<div class="t" style="left:115.68px;top:319.75px;font-size:6.5px;color:#d0d0d0;font-family:'Liberation Sans',sans-serif;transform:scaleX(0.9573);transform-origin:0 0;">Textport</div>
<div class="a" style="left:381px;top:316.5px;width:39px;height:12.0px;background:#363636;border:1px solid #262626;border-radius:1.5px;box-shadow:inset 0 1px 0 rgba(255,255,255,.06);"></div>
<div class="t" style="left:389.63px;top:319.75px;font-size:6.5px;color:#6a6a6a;font-family:'Liberation Sans',sans-serif;transform:scaleX(0.9260);transform-origin:0 0;">Execute</div>
<div class="a" style="left:427px;top:316.5px;width:32.5px;height:12.0px;background:linear-gradient(#474747,#3a3a3a);border:1px solid #262626;border-radius:1.5px;box-shadow:inset 0 1px 0 rgba(255,255,255,.06);"></div>
<div class="t" style="left:435.66px;top:319.75px;font-size:6.5px;color:#e4e4e4;font-family:'Liberation Sans',sans-serif;transform:scaleX(0.9133);transform-origin:0 0;">Close</div>
</body></html>
